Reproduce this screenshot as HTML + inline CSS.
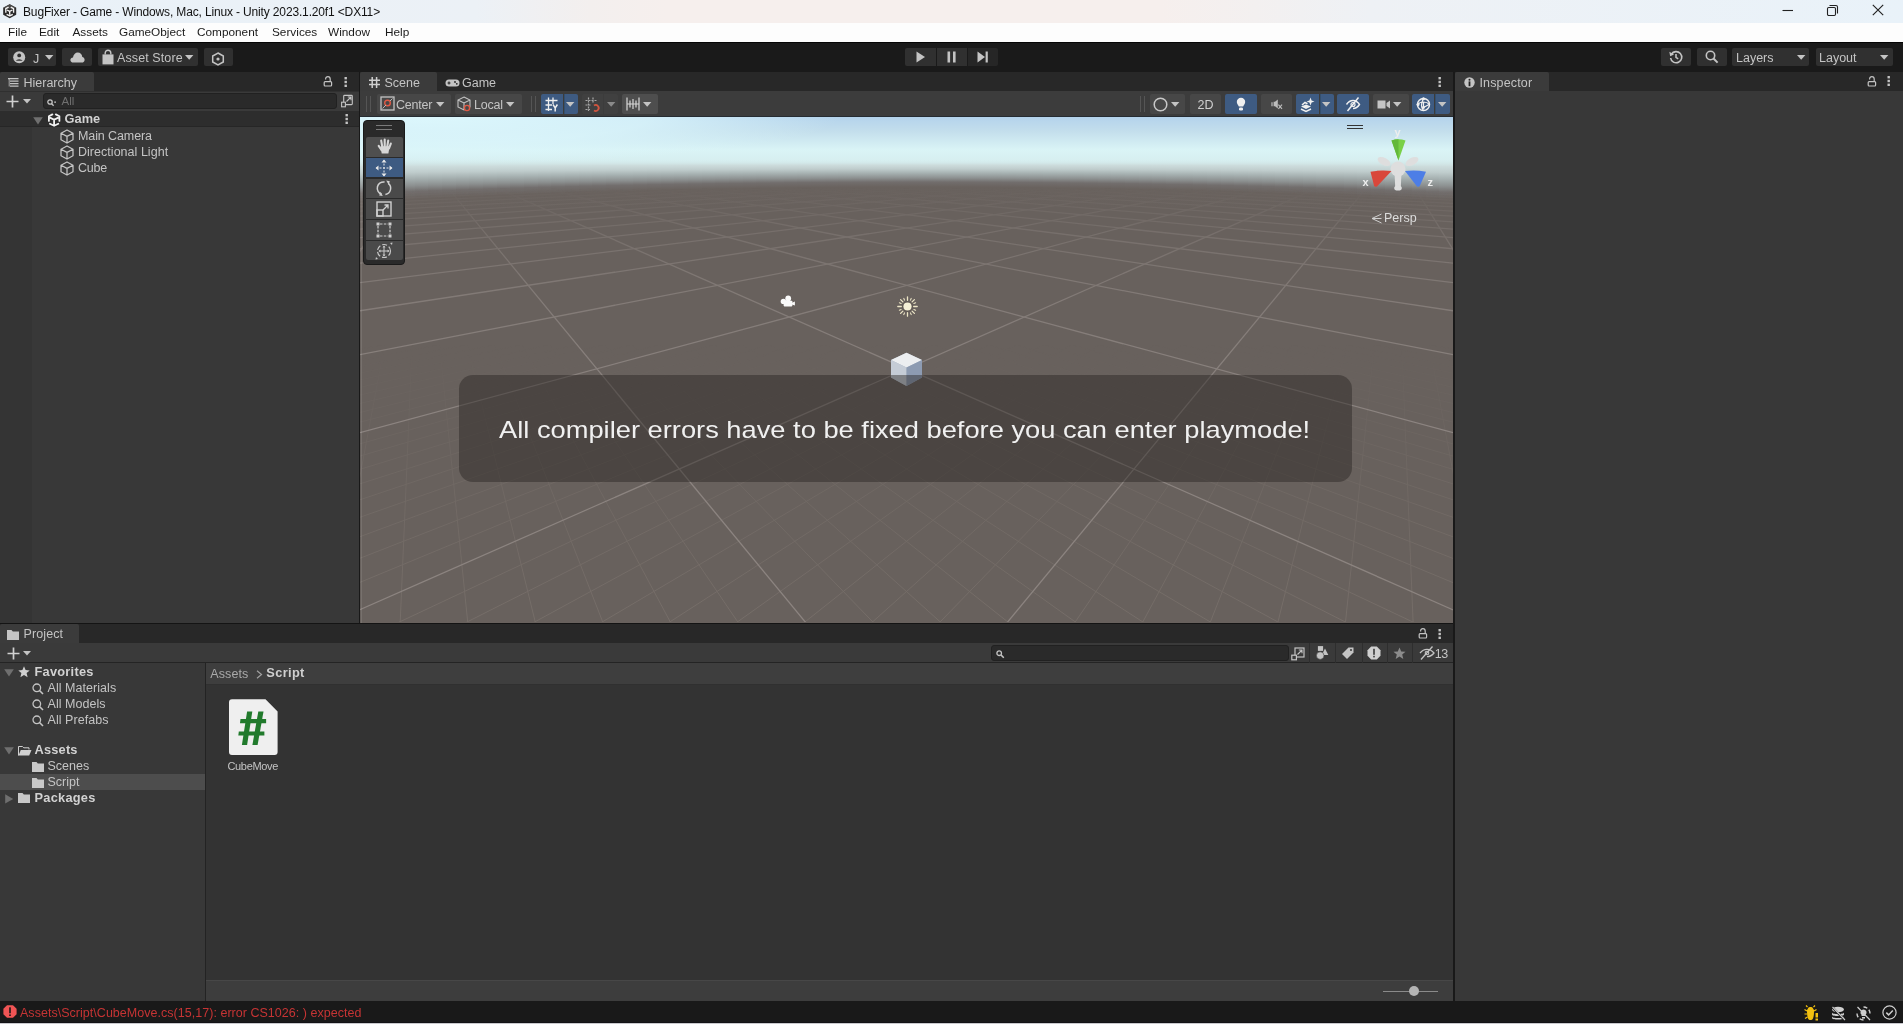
<!DOCTYPE html>
<html><head><meta charset="utf-8">
<style>
*{box-sizing:border-box;margin:0;padding:0}
body{width:1903px;height:1024px;position:relative;overflow:hidden;will-change:transform;background:#191919;font-family:"Liberation Sans",sans-serif;font-size:12.5px;color:#c4c4c4}
.a{position:absolute}
.t{position:absolute;white-space:nowrap;line-height:1}
svg{position:absolute;overflow:visible}
#title{left:0;top:0;width:1903px;height:22.5px;background:linear-gradient(90deg,#e9f1f8 0%,#ecf1f6 25%,#f3efee 31%,#f6efed 35%,#f6efed 61%,#f3f0f0 66%,#eef1f5 72%,#e9f2f9 100%)}
#menu{left:0;top:22.5px;width:1903px;height:20px;background:#fdfdfd}
#menu span{position:absolute;top:4.8px;color:#1a1a1a;font-size:11.8px;line-height:1}
.tb{position:absolute;top:48px;height:18px;background:#303030;border-radius:2px}
.tabstrip{position:absolute;background:#282828}
.tab{position:absolute;background:#3b3b3b;border-radius:2px 2px 0 0}
.sb{position:absolute;top:94px;height:20px;background:#474747;border-radius:2px}
.blue{background:#3e5b82}
.w{fill:#c4c4c4}
.s{stroke:#c4c4c4;fill:none}
</style></head><body>

<!-- ============ TITLE BAR ============ -->
<div id="title" class="a">
  <svg style="left:3px;top:3.5px" width="14" height="15" viewBox="0 0 14 15">
    <path d="M6.7 0.3L13.2 3.8V10.8L6.7 14.3L0.2 10.8V3.8Z" fill="#2a2a2a"/><path d="M6.7 0.3L13.2 3.8L6.7 5L0.2 3.8Z" fill="#4a4a4a"/>
    <g stroke="#f4f4f4" stroke-width="1.35" fill="none" stroke-linejoin="round"><path d="M5.6 3.1L2.8 4.6V8.7M7.8 3.1L10.6 4.6V8.7M4 6L6.7 7.4L9.4 6M6.7 7.4V10.8M3.6 10.3L6.7 11.9L9.8 10.3"/></g>
  </svg>
  <span class="t" style="left:23px;top:5.5px;font-size:12px;letter-spacing:-0.15px;color:#111">BugFixer - Game - Windows, Mac, Linux - Unity 2023.1.20f1 &lt;DX11&gt;</span>
  <svg style="left:1782px;top:5px" width="12" height="12" viewBox="0 0 12 12"><path d="M0.5 5.5H11" stroke="#222" stroke-width="1.1"/></svg>
  <svg style="left:1826px;top:4px" width="13" height="13" viewBox="0 0 13 13"><rect x="1.5" y="3.5" width="8" height="8" rx="1.2" stroke="#222" fill="none" stroke-width="1.1"/><path d="M3.5 1.5H10a1.5 1.5 0 0 1 1.5 1.5V9.5" stroke="#222" fill="none" stroke-width="1.1"/></svg>
  <svg style="left:1872px;top:4px" width="12" height="12" viewBox="0 0 12 12"><path d="M0.8 0.8L11.2 11.2M11.2 0.8L0.8 11.2" stroke="#222" stroke-width="1.15"/></svg>
</div>

<!-- ============ MENU BAR ============ -->
<div id="menu" class="a">
  <span style="left:8px">File</span><span style="left:39px">Edit</span><span style="left:72.5px">Assets</span><span style="left:119px">GameObject</span><span style="left:197px">Component</span><span style="left:272px">Services</span><span style="left:328px">Window</span><span style="left:385px">Help</span>
</div>

<!-- ============ MAIN TOOLBAR ============ -->
<div class="a" style="left:0;top:42px;width:1903px;height:30px;background:#1a1a1a;border-top:1.5px solid #050505"></div>
<div class="tb" style="left:8px;width:48px"></div>
<svg style="left:13px;top:51px" width="13" height="13" viewBox="0 0 13 13"><circle cx="6.2" cy="6.2" r="6" fill="#c4c4c4"/><circle cx="6.2" cy="4.4" r="1.9" fill="#303030"/><path d="M2.8 9.8a3.6 2.4 0 0 1 6.8 0Z" fill="#303030"/></svg>
<span class="t" style="left:33px;top:53px;font-size:12.5px;color:#c4c4c4">J</span>
<svg style="left:45px;top:55px" width="9" height="5" viewBox="0 0 9 5"><path d="M0 0H8.4L4.2 4.8Z" fill="#c4c4c4"/></svg>
<div class="tb" style="left:62px;width:30px"></div>
<svg style="left:70px;top:52px" width="15" height="11" viewBox="0 0 15 11"><path d="M3.3 10.6C1.5 10.6 0.4 9.4 0.4 8S1.5 5.5 3 5.4C3.3 2.6 5.4 0.5 7.8 0.5C10.2 0.5 12 2.3 12.3 4.9C13.7 5.1 14.6 6.3 14.6 7.7C14.6 9.3 13.5 10.6 11.8 10.6Z" fill="#c4c4c4"/></svg>
<div class="tb" style="left:98px;width:100px"></div>
<svg style="left:102px;top:50px" width="12" height="15" viewBox="0 0 12 15"><path d="M3.2 4.5V3A2.8 2.8 0 0 1 8.8 3V4.5" stroke="#c4c4c4" stroke-width="1.4" fill="none"/><rect x="0.5" y="4.4" width="11" height="10" fill="#c4c4c4"/></svg>
<span class="t" style="left:117px;top:52px;font-size:12.5px;letter-spacing:0.1px">Asset Store</span>
<svg style="left:185px;top:55px" width="9" height="5" viewBox="0 0 9 5"><path d="M0 0H8.4L4.2 4.8Z" fill="#c4c4c4"/></svg>
<div class="tb" style="left:204px;width:29px"></div>
<svg style="left:211px;top:51.5px" width="14" height="14" viewBox="0 0 14 14"><path d="M7 1L12.3 4V10L7 13L1.7 10V4Z" stroke="#c4c4c4" stroke-width="1.5" fill="none"/><circle cx="7" cy="7" r="1.6" fill="#c4c4c4"/></svg>

<div class="tb" style="left:905px;width:31px;border-radius:2px 0 0 2px"></div>
<div class="tb" style="left:937px;width:30px;border-radius:0"></div>
<div class="tb" style="left:968px;width:30px;background:#262626;border-radius:0 2px 2px 0"></div>
<svg style="left:916px;top:51px" width="10" height="12" viewBox="0 0 10 12"><path d="M0.5 0.5L9 6L0.5 11.5Z" fill="#c4c4c4"/></svg>
<svg style="left:947px;top:51px" width="10" height="12" viewBox="0 0 10 12"><rect x="0.5" y="0.5" width="2.6" height="11" fill="#c4c4c4"/><rect x="6" y="0.5" width="2.6" height="11" fill="#c4c4c4"/></svg>
<svg style="left:977px;top:51px" width="12" height="12" viewBox="0 0 12 12"><path d="M0.5 0.5L8 6L0.5 11.5Z" fill="#c4c4c4"/><rect x="8.6" y="0.5" width="2.2" height="11" fill="#c4c4c4"/></svg>

<div class="tb" style="left:1661px;width:30px"></div>
<svg style="left:1669px;top:50px" width="14" height="14" viewBox="0 0 14 14"><path d="M2.4 4.2A5.6 5.6 0 1 1 1.6 8" stroke="#c4c4c4" stroke-width="1.6" fill="none"/><path d="M0.3 1.8L1.2 6.2L5 4.6Z" fill="#c4c4c4"/><path d="M7 4V7.4L9.2 8.8" stroke="#c4c4c4" stroke-width="1.6" fill="none"/></svg>
<div class="tb" style="left:1697px;width:30px"></div>
<svg style="left:1705px;top:50px" width="14" height="14" viewBox="0 0 14 14"><circle cx="5.5" cy="5.5" r="4.2" stroke="#c4c4c4" stroke-width="1.6" fill="none"/><path d="M8.5 8.5L12.6 12.6" stroke="#c4c4c4" stroke-width="2"/></svg>
<div class="tb" style="left:1732px;width:77px"></div>
<span class="t" style="left:1736px;top:51.8px;font-size:12.5px">Layers</span>
<svg style="left:1797px;top:55px" width="9" height="5" viewBox="0 0 9 5"><path d="M0 0H8.4L4.2 4.8Z" fill="#c4c4c4"/></svg>
<div class="tb" style="left:1816px;width:77px"></div>
<span class="t" style="left:1819px;top:51.8px;font-size:12.5px">Layout</span>
<svg style="left:1880px;top:55px" width="9" height="5" viewBox="0 0 9 5"><path d="M0 0H8.4L4.2 4.8Z" fill="#c4c4c4"/></svg>

<!-- ============ HIERARCHY ============ -->
<div class="tabstrip" style="left:0;top:72px;width:359px;height:19px"></div>
<div class="tab" style="left:0;top:72px;width:94px;height:19px"></div>
<svg style="left:8px;top:78px" width="11" height="9" viewBox="0 0 11 9"><path d="M0 0.6H10.5M2 3.1H10.5M2 5.6H10.5M2 8.1H10.5" stroke="#c4c4c4" stroke-width="1.3"/><path d="M1.2 1V8.5" stroke="#c4c4c4" stroke-width="0.8"/></svg>
<span class="t" style="left:23.5px;top:77.4px;font-size:12.5px;letter-spacing:0px;color:#c4c4c4">Hierarchy</span>
<svg style="left:323px;top:76px" width="10" height="11" viewBox="0 0 10 11"><path d="M2.6 3.6V2.9A2.3 2.3 0 0 1 7.2 2.9V5.4" stroke="#c4c4c4" stroke-width="1.2" fill="none"/><rect x="1.2" y="5.6" width="7.4" height="4.4" rx="0.9" stroke="#c4c4c4" stroke-width="1.2" fill="none"/></svg>
<svg style="left:344px;top:77px" width="4" height="10" viewBox="0 0 4 10"><rect x="0.5" y="0" width="2.4" height="2.4" fill="#c4c4c4"/><rect x="0.5" y="3.8" width="2.4" height="2.4" fill="#c4c4c4"/><rect x="0.5" y="7.6" width="2.4" height="2.4" fill="#c4c4c4"/></svg>
<div class="a" style="left:0;top:91px;width:359px;height:20px;background:#3a3a3a;border-top:1px solid #303030"></div>
<svg style="left:6px;top:95px" width="13" height="13" viewBox="0 0 13 13"><path d="M6.5 0.5V12.5M0.5 6.5H12.5" stroke="#d0d0d0" stroke-width="1.7"/></svg>
<svg style="left:22.5px;top:99px" width="9" height="5" viewBox="0 0 9 5"><path d="M0 0H8L4 4.6Z" fill="#c4c4c4"/></svg>
<div class="a" style="left:43px;top:93px;width:294px;height:15.5px;background:#2a2a2a;border-radius:3px;border:1px solid #212121"></div>
<svg style="left:47px;top:98.5px" width="10" height="8" viewBox="0 0 10 8"><circle cx="3" cy="3" r="2.2" stroke="#c4c4c4" stroke-width="1.3" fill="none"/><path d="M4.6 4.6L6.6 6.8" stroke="#c4c4c4" stroke-width="1.4"/><path d="M7.2 3.2H9" stroke="#c4c4c4" stroke-width="1.3"/></svg>
<span class="t" style="left:61.5px;top:96.2px;font-size:11.5px;color:#707070">All</span>
<svg style="left:340px;top:94px" width="14" height="14" viewBox="0 0 14 14"><rect x="3.7" y="1.4" width="8.6" height="9.2" rx="0.8" stroke="#c4c4c4" fill="none" stroke-width="1.1"/><rect x="1.6" y="8.2" width="3.8" height="4.6" stroke="#c4c4c4" fill="#3c3c3c" stroke-width="1.1"/><path d="M6.5 7.5L11 3M7.8 3H11V6.2" stroke="#c4c4c4" fill="none" stroke-width="1.1"/></svg>
<div class="a" style="left:0;top:111px;width:359px;height:512px;background:#383838"></div>
<div class="a" style="left:0;top:127px;width:32px;height:496px;background:#343434"></div>
<div class="a" style="left:0;top:111px;width:359px;height:16px;background:#2d2d2d;border-bottom:1px solid #262626"></div>
<svg style="left:33px;top:116.5px" width="10" height="8" viewBox="0 0 10 8"><path d="M0.2 0.2H9.8L5 7.6Z" fill="#6f6f6f"/></svg>
<svg style="left:47.5px;top:112.6px" width="12.5" height="14" viewBox="0 0 12.5 14"><g stroke="#f2f2f2" stroke-width="1.8" fill="none" stroke-linejoin="round" stroke-linecap="round"><path d="M4.4 1.4L0.9 3.3V7.9M7.8 1.4L11.4 3.3V7.9M2.4 4.9L6.1 6.7L9.8 4.9M6.1 6.7V11.4M1.9 10.8L6.1 12.8L10.3 10.8"/></g></svg>
<span class="t" style="left:64.5px;top:113.3px;font-size:12.8px;font-weight:bold;color:#d2d2d2;letter-spacing:0.05px">Game</span>
<svg style="left:344.5px;top:114px" width="4" height="10" viewBox="0 0 4 10"><rect x="0.5" y="0" width="2.4" height="2.4" fill="#c4c4c4"/><rect x="0.5" y="3.8" width="2.4" height="2.4" fill="#c4c4c4"/><rect x="0.5" y="7.6" width="2.4" height="2.4" fill="#c4c4c4"/></svg>
<!-- children -->
<svg style="left:60px;top:128.5px" width="14" height="15" viewBox="0 0 14 15"><path d="M7 1L13 4.2V10.8L7 14L1 10.8V4.2Z M1 4.2L7 7.4L13 4.2M7 7.4V14" stroke="#c4c4c4" stroke-width="1.25" fill="none" stroke-linejoin="round"/></svg>
<span class="t" style="left:78px;top:129.6px;font-size:12.5px;letter-spacing:-0.1px">Main Camera</span>
<svg style="left:60px;top:144.5px" width="14" height="15" viewBox="0 0 14 15"><path d="M7 1L13 4.2V10.8L7 14L1 10.8V4.2Z M1 4.2L7 7.4L13 4.2M7 7.4V14" stroke="#c4c4c4" stroke-width="1.25" fill="none" stroke-linejoin="round"/></svg>
<span class="t" style="left:78px;top:145.6px;font-size:12.5px;letter-spacing:0.03px">Directional Light</span>
<svg style="left:60px;top:160.5px" width="14" height="15" viewBox="0 0 14 15"><path d="M7 1L13 4.2V10.8L7 14L1 10.8V4.2Z M1 4.2L7 7.4L13 4.2M7 7.4V14" stroke="#c4c4c4" stroke-width="1.25" fill="none" stroke-linejoin="round"/></svg>
<span class="t" style="left:78px;top:161.6px;font-size:12.5px;letter-spacing:-0.2px">Cube</span>

<!-- separator between hierarchy and scene -->
<div class="a" style="left:359px;top:72px;width:2px;height:551px;background:#181818"></div>

<!-- ============ SCENE ============ -->
<div class="tabstrip" style="left:360px;top:72px;width:1093px;height:19px"></div>
<div class="tab" style="left:360px;top:72px;width:77px;height:19px"></div>
<svg style="left:369px;top:77px" width="11" height="11" viewBox="0 0 11 11"><path d="M3.2 0V11M7.6 0V11M0 3.2H11M0 7.6H11" stroke="#d0d0d0" stroke-width="1.5"/></svg>
<span class="t" style="left:384.5px;top:77px;font-size:12.5px">Scene</span>
<svg style="left:444.5px;top:79px" width="15" height="8" viewBox="0 0 15 8"><rect x="0.5" y="0.5" width="14" height="7" rx="3.5" fill="#c4c4c4"/><path d="M2.5 4H5.5M4 2.5V5.5" stroke="#232323" stroke-width="1.1"/><circle cx="10" cy="3" r="0.9" fill="#232323"/><circle cx="11.8" cy="4.8" r="0.9" fill="#232323"/></svg>
<span class="t" style="left:462px;top:77px;font-size:12.5px">Game</span>
<svg style="left:1438px;top:77px" width="4" height="10" viewBox="0 0 4 10"><rect x="0.5" y="0" width="2.4" height="2.4" fill="#c4c4c4"/><rect x="0.5" y="3.8" width="2.4" height="2.4" fill="#c4c4c4"/><rect x="0.5" y="7.6" width="2.4" height="2.4" fill="#c4c4c4"/></svg>

<div class="a" style="left:360px;top:91px;width:1093px;height:26px;background:#3c3c3c;border-bottom:1px solid #262c32"></div>
<div class="a" style="left:366px;top:96px;width:1px;height:16px;background:#555"></div>
<div class="a" style="left:370px;top:96px;width:1px;height:16px;background:#555"></div>
<div class="sb" style="left:377px;width:74px"></div>
<svg style="left:380px;top:96px" width="15" height="15" viewBox="0 0 15 15"><rect x="1" y="1" width="13" height="13" stroke="#c4c4c4" stroke-width="1.3" fill="none"/><circle cx="7.5" cy="7" r="2.8" stroke="#e05a45" stroke-width="1.4" fill="none"/><path d="M2.5 12.5L6 9M12.5 2.5L10 5" stroke="#c4c4c4" stroke-width="0.9"/></svg>
<span class="t" style="left:396px;top:98.5px;font-size:12.5px;letter-spacing:-0.2px">Center</span>
<svg style="left:436px;top:102px" width="9" height="5" viewBox="0 0 9 5"><path d="M0 0H8.4L4.2 4.8Z" fill="#c4c4c4"/></svg>
<div class="sb" style="left:455px;width:67px"></div>
<svg style="left:457px;top:95.5px" width="15" height="16" viewBox="0 0 15 16"><path d="M7 1L13 4V11L7 14L1 11V4Z M1 4L7 7L13 4M7 7V14" stroke="#c4c4c4" stroke-width="1.1" fill="none"/><circle cx="10" cy="12" r="2.6" stroke="#e05a45" stroke-width="1.4" fill="#474747"/></svg>
<span class="t" style="left:474px;top:98.5px;font-size:12.5px;letter-spacing:-0.2px">Local</span>
<svg style="left:506px;top:102px" width="9" height="5" viewBox="0 0 9 5"><path d="M0 0H8.4L4.2 4.8Z" fill="#c4c4c4"/></svg>

<div class="a" style="left:531px;top:96px;width:1px;height:16px;background:#555"></div>
<div class="a" style="left:534.5px;top:96px;width:1px;height:16px;background:#555"></div>
<div class="sb blue" style="left:541px;width:22px;border-radius:2px 0 0 2px"></div>
<div class="sb blue" style="left:563.5px;width:14px;border-radius:0 2px 2px 0;border-left:1px solid #34506f"></div>
<svg style="left:545px;top:96.5px" width="15" height="15" viewBox="0 0 15 15"><path d="M3.5 0.5V14M8 0.5V7M0.5 3.5H12.5M0.5 8H7M0.5 12.5H7" stroke="#f0f0f0" stroke-width="1.3" fill="none"/><path d="M8 7.5L10.2 10.8L12.4 7.5M10.2 10.8V14.5" stroke="#f0f0f0" stroke-width="1.5" fill="none"/></svg>
<svg style="left:566px;top:102px" width="9" height="5" viewBox="0 0 9 5"><path d="M0 0H8.4L4.2 4.8Z" fill="#c4c4c4"/></svg>
<div class="sb" style="left:582px;width:21px;border-radius:2px 0 0 2px;background:#404040"></div>
<div class="sb" style="left:604px;width:14px;border-radius:0 2px 2px 0;background:#404040"></div>
<svg style="left:585px;top:96.5px" width="15" height="15" viewBox="0 0 15 15"><path d="M3.5 0.5V14M8 0.5V6M0.5 3.5H12M0.5 8H6M0.5 12.5H5" stroke="#a8a8a8" stroke-width="1.2" fill="none" stroke-dasharray="2 1"/><path d="M9 8.5A3 3 0 1 1 9 13.5" stroke="#d2553f" stroke-width="1.8" fill="none"/></svg>
<svg style="left:607px;top:102px" width="9" height="5" viewBox="0 0 9 5"><path d="M0 0H8.4L4.2 4.8Z" fill="#8a8a8a"/></svg>
<div class="sb" style="left:622px;width:36px;background:#4e4e4e"></div>
<svg style="left:626px;top:97px" width="14" height="14" viewBox="0 0 14 14"><path d="M1 0.5V13.5M13 0.5V13.5M1 7H13M4 3.5V10.5M7 2V12M10 3.5V10.5" stroke="#d8d8d8" stroke-width="1.2" fill="none"/></svg>
<svg style="left:643px;top:102px" width="9" height="5" viewBox="0 0 9 5"><path d="M0 0H8.4L4.2 4.8Z" fill="#c4c4c4"/></svg>

<div class="a" style="left:1140px;top:96px;width:1px;height:16px;background:#555"></div>
<div class="a" style="left:1143.5px;top:96px;width:1px;height:16px;background:#555"></div>
<div class="sb" style="left:1150px;width:35px"></div>
<svg style="left:1153px;top:96.5px" width="15" height="15" viewBox="0 0 15 15"><circle cx="7.5" cy="7.5" r="6.3" stroke="#c8c8c8" stroke-width="1.5" fill="none"/><path d="M13.8 7.5A6.3 6.3 0 0 1 4 12.8A6 6 0 0 0 11.5 3A6.3 6.3 0 0 1 13.8 7.5Z" fill="#c8c8c8"/></svg>
<svg style="left:1171px;top:102px" width="9" height="5" viewBox="0 0 9 5"><path d="M0 0H8.4L4.2 4.8Z" fill="#c4c4c4"/></svg>
<div class="sb" style="left:1190px;width:31px"></div>
<span class="t" style="left:1197.5px;top:98.6px;font-size:12.5px;color:#d0d0d0">2D</span>
<div class="sb blue" style="left:1225px;width:32px"></div>
<svg style="left:1236px;top:96.5px" width="10" height="15" viewBox="0 0 10 15"><path d="M5 0.8A4.2 4.2 0 0 1 9.2 5C9.2 7 7.6 8 7.2 9.6H2.8C2.4 8 0.8 7 0.8 5A4.2 4.2 0 0 1 5 0.8Z" fill="#f0f0f0"/><rect x="3" y="10.5" width="4" height="3" rx="1.2" fill="#f0f0f0"/></svg>
<div class="sb" style="left:1261px;width:31px"></div>
<svg style="left:1271px;top:99px" width="12" height="11" viewBox="0 0 12 11"><path d="M1 3.2V7.2" stroke="#bdbdbd" stroke-width="1.2"/><path d="M2.6 2.8H4L6.8 0.5V9.5L4 7.2H2.6Z" fill="#bdbdbd"/><path d="M7.4 5.6L11 9.8M11 5.6L7.4 9.8" stroke="#bdbdbd" stroke-width="1.1"/></svg>
<div class="sb blue" style="left:1296px;width:23px;border-radius:2px 0 0 2px"></div>
<div class="sb blue" style="left:1319.5px;width:14px;border-radius:0 2px 2px 0;border-left:1px solid #34506f"></div>
<svg style="left:1300px;top:96.5px" width="15" height="15" viewBox="0 0 15 15"><path d="M1 9.5L6 7.5L11 9.5L6 12Z" fill="#f0f0f0"/><path d="M1 12L6 14.5L11 12" stroke="#f0f0f0" stroke-width="1.5" fill="none"/><path d="M10.5 0.5L11.6 3.4L14.5 4.5L11.6 5.6L10.5 8.5L9.4 5.6L6.5 4.5L9.4 3.4Z" fill="#f0f0f0"/><path d="M2 8L5 5.5L7.5 6.8" stroke="#f0f0f0" stroke-width="1.6" fill="none"/></svg>
<svg style="left:1322px;top:102px" width="9" height="5" viewBox="0 0 9 5"><path d="M0 0H8.4L4.2 4.8Z" fill="#c4c4c4"/></svg>
<div class="sb blue" style="left:1337px;width:32px"></div>
<svg style="left:1345px;top:96px" width="16" height="16" viewBox="0 0 16 16"><path d="M1.5 8.5C3.5 5.5 6 4.5 8 4.5C10 4.5 12.5 5.5 14.5 8.5C12.5 11.5 10 12.5 8 12.5" stroke="#f0f0f0" stroke-width="1.4" fill="none"/><circle cx="8" cy="8.5" r="2" stroke="#f0f0f0" stroke-width="1.2" fill="none"/><path d="M2.5 15L13.5 1.5" stroke="#f0f0f0" stroke-width="1.5"/></svg>
<div class="sb" style="left:1373px;width:36px"></div>
<svg style="left:1377px;top:98.5px" width="14" height="11" viewBox="0 0 14 11"><rect x="0.5" y="1.5" width="8" height="8" fill="#c4c4c4"/><path d="M9.5 4L13 1.5V9.5L9.5 7Z" fill="#c4c4c4"/></svg>
<svg style="left:1393px;top:102px" width="9" height="5" viewBox="0 0 9 5"><path d="M0 0H8.4L4.2 4.8Z" fill="#c4c4c4"/></svg>
<div class="sb blue" style="left:1412px;width:22px;border-radius:2px 0 0 2px"></div>
<div class="sb blue" style="left:1434.5px;width:15px;border-radius:0 2px 2px 0;border-left:1px solid #34506f"></div>
<svg style="left:1415.5px;top:96.5px" width="15" height="15" viewBox="0 0 15 15"><circle cx="7.5" cy="7.5" r="6" stroke="#f0f0f0" stroke-width="1.5" fill="none"/><path d="M1.5 7.5C3 5.8 5 5 7.5 5S12 5.8 13.5 7.5M7.5 1.5C6 4 5.5 6 5.5 8.5S6.5 12 7.5 13.5M7.5 5.5V10.5L13 7.5" stroke="#f0f0f0" stroke-width="1.2" fill="none"/><circle cx="7.5" cy="1.8" r="1.5" fill="#f0f0f0"/><circle cx="2" cy="7.5" r="1.5" fill="#f0f0f0"/><circle cx="7.5" cy="10.5" r="1.4" fill="#f0f0f0"/></svg>
<svg style="left:1438px;top:102px" width="9" height="5" viewBox="0 0 9 5"><path d="M0 0H8.4L4.2 4.8Z" fill="#c4c4c4"/></svg>

<!-- scene view -->
<div class="a" style="left:360px;top:117px;width:1093px;height:506px;overflow:hidden;background:#68615d">
  <svg style="left:0;top:0" width="1093" height="90" viewBox="0 0 1093 90"><defs><linearGradient id="skyb" x1="0" y1="0" x2="0" y2="90" gradientUnits="userSpaceOnUse"><stop offset="0.0000" stop-color="#b4d3ec" stop-opacity="1"/><stop offset="0.1556" stop-color="#c3deec" stop-opacity="1"/><stop offset="0.3667" stop-color="#daf4f6" stop-opacity="1"/><stop offset="0.5000" stop-color="#d6eeef" stop-opacity="1"/><stop offset="1.0000" stop-color="#d6eeef" stop-opacity="1"/></linearGradient><linearGradient id="fogb" x1="0" y1="0" x2="0" y2="90" gradientUnits="userSpaceOnUse"><stop offset="0.4778" stop-color="#d6eeef" stop-opacity="0"/><stop offset="0.5333" stop-color="#cbdada" stop-opacity="0.9"/><stop offset="0.5778" stop-color="#bfcccc" stop-opacity="1"/><stop offset="0.6222" stop-color="#a7b2b2" stop-opacity="1"/><stop offset="0.6778" stop-color="#8c9090" stop-opacity="1"/><stop offset="0.7222" stop-color="#726e6d" stop-opacity="1"/><stop offset="0.7778" stop-color="#69625e" stop-opacity="1"/><stop offset="1.0000" stop-color="#68615d" stop-opacity="1"/></linearGradient><radialGradient id="skl" cx="0" cy="0" r="1" gradientUnits="userSpaceOnUse" gradientTransform="translate(60 0) scale(420 48)"><stop offset="0" stop-color="#dcf7fc" stop-opacity="1"/><stop offset="0.55" stop-color="#dcf7fc" stop-opacity="0.75"/><stop offset="1" stop-color="#dcf7fc" stop-opacity="0"/></radialGradient><linearGradient id="f0" href="#fogb" gradientTransform="translate(0 62.15) scale(1 1.564) translate(0 -56)"/><linearGradient id="f1" href="#fogb" gradientTransform="translate(0 61.85) scale(1 1.536) translate(0 -56)"/><linearGradient id="f2" href="#fogb" gradientTransform="translate(0 61.56) scale(1 1.509) translate(0 -56)"/><linearGradient id="f3" href="#fogb" gradientTransform="translate(0 61.27) scale(1 1.483) translate(0 -56)"/><linearGradient id="f4" href="#fogb" gradientTransform="translate(0 60.99) scale(1 1.458) translate(0 -56)"/><linearGradient id="f5" href="#fogb" gradientTransform="translate(0 60.72) scale(1 1.433) translate(0 -56)"/><linearGradient id="f6" href="#fogb" gradientTransform="translate(0 60.46) scale(1 1.409) translate(0 -56)"/><linearGradient id="f7" href="#fogb" gradientTransform="translate(0 60.21) scale(1 1.385) translate(0 -56)"/><linearGradient id="f8" href="#fogb" gradientTransform="translate(0 59.96) scale(1 1.363) translate(0 -56)"/><linearGradient id="f9" href="#fogb" gradientTransform="translate(0 59.72) scale(1 1.341) translate(0 -56)"/><linearGradient id="f10" href="#fogb" gradientTransform="translate(0 59.49) scale(1 1.320) translate(0 -56)"/><linearGradient id="f11" href="#fogb" gradientTransform="translate(0 59.26) scale(1 1.299) translate(0 -56)"/><linearGradient id="f12" href="#fogb" gradientTransform="translate(0 59.04) scale(1 1.279) translate(0 -56)"/><linearGradient id="f13" href="#fogb" gradientTransform="translate(0 58.83) scale(1 1.260) translate(0 -56)"/><linearGradient id="f14" href="#fogb" gradientTransform="translate(0 58.63) scale(1 1.241) translate(0 -56)"/><linearGradient id="f15" href="#fogb" gradientTransform="translate(0 58.44) scale(1 1.223) translate(0 -56)"/><linearGradient id="f16" href="#fogb" gradientTransform="translate(0 58.25) scale(1 1.206) translate(0 -56)"/><linearGradient id="f17" href="#fogb" gradientTransform="translate(0 58.07) scale(1 1.190) translate(0 -56)"/><linearGradient id="f18" href="#fogb" gradientTransform="translate(0 57.90) scale(1 1.174) translate(0 -56)"/><linearGradient id="f19" href="#fogb" gradientTransform="translate(0 57.73) scale(1 1.159) translate(0 -56)"/><linearGradient id="f20" href="#fogb" gradientTransform="translate(0 57.57) scale(1 1.144) translate(0 -56)"/><linearGradient id="f21" href="#fogb" gradientTransform="translate(0 57.42) scale(1 1.131) translate(0 -56)"/><linearGradient id="f22" href="#fogb" gradientTransform="translate(0 57.28) scale(1 1.117) translate(0 -56)"/><linearGradient id="f23" href="#fogb" gradientTransform="translate(0 57.15) scale(1 1.105) translate(0 -56)"/><linearGradient id="f24" href="#fogb" gradientTransform="translate(0 57.02) scale(1 1.093) translate(0 -56)"/><linearGradient id="f25" href="#fogb" gradientTransform="translate(0 56.90) scale(1 1.082) translate(0 -56)"/><linearGradient id="f26" href="#fogb" gradientTransform="translate(0 56.79) scale(1 1.072) translate(0 -56)"/><linearGradient id="f27" href="#fogb" gradientTransform="translate(0 56.68) scale(1 1.063) translate(0 -56)"/><linearGradient id="f28" href="#fogb" gradientTransform="translate(0 56.58) scale(1 1.054) translate(0 -56)"/><linearGradient id="f29" href="#fogb" gradientTransform="translate(0 56.49) scale(1 1.045) translate(0 -56)"/><linearGradient id="f30" href="#fogb" gradientTransform="translate(0 56.41) scale(1 1.038) translate(0 -56)"/><linearGradient id="f31" href="#fogb" gradientTransform="translate(0 56.34) scale(1 1.031) translate(0 -56)"/><linearGradient id="f32" href="#fogb" gradientTransform="translate(0 56.27) scale(1 1.025) translate(0 -56)"/><linearGradient id="f33" href="#fogb" gradientTransform="translate(0 56.21) scale(1 1.019) translate(0 -56)"/><linearGradient id="f34" href="#fogb" gradientTransform="translate(0 56.16) scale(1 1.014) translate(0 -56)"/><linearGradient id="f35" href="#fogb" gradientTransform="translate(0 56.11) scale(1 1.010) translate(0 -56)"/><linearGradient id="f36" href="#fogb" gradientTransform="translate(0 56.08) scale(1 1.007) translate(0 -56)"/><linearGradient id="f37" href="#fogb" gradientTransform="translate(0 56.05) scale(1 1.004) translate(0 -56)"/><linearGradient id="f38" href="#fogb" gradientTransform="translate(0 56.02) scale(1 1.002) translate(0 -56)"/><linearGradient id="f39" href="#fogb" gradientTransform="translate(0 56.01) scale(1 1.001) translate(0 -56)"/><linearGradient id="f40" href="#fogb" gradientTransform="translate(0 56.00) scale(1 1.000) translate(0 -56)"/><linearGradient id="f41" href="#fogb" gradientTransform="translate(0 56.00) scale(1 1.000) translate(0 -56)"/><linearGradient id="f42" href="#fogb" gradientTransform="translate(0 56.01) scale(1 1.001) translate(0 -56)"/><linearGradient id="f43" href="#fogb" gradientTransform="translate(0 56.02) scale(1 1.002) translate(0 -56)"/><linearGradient id="f44" href="#fogb" gradientTransform="translate(0 56.05) scale(1 1.004) translate(0 -56)"/><linearGradient id="f45" href="#fogb" gradientTransform="translate(0 56.08) scale(1 1.007) translate(0 -56)"/><linearGradient id="f46" href="#fogb" gradientTransform="translate(0 56.11) scale(1 1.010) translate(0 -56)"/><linearGradient id="f47" href="#fogb" gradientTransform="translate(0 56.16) scale(1 1.015) translate(0 -56)"/><linearGradient id="f48" href="#fogb" gradientTransform="translate(0 56.21) scale(1 1.019) translate(0 -56)"/><linearGradient id="f49" href="#fogb" gradientTransform="translate(0 56.27) scale(1 1.025) translate(0 -56)"/><linearGradient id="f50" href="#fogb" gradientTransform="translate(0 56.34) scale(1 1.031) translate(0 -56)"/><linearGradient id="f51" href="#fogb" gradientTransform="translate(0 56.41) scale(1 1.038) translate(0 -56)"/><linearGradient id="f52" href="#fogb" gradientTransform="translate(0 56.50) scale(1 1.046) translate(0 -56)"/><linearGradient id="f53" href="#fogb" gradientTransform="translate(0 56.59) scale(1 1.054) translate(0 -56)"/><linearGradient id="f54" href="#fogb" gradientTransform="translate(0 56.68) scale(1 1.063) translate(0 -56)"/><linearGradient id="f55" href="#fogb" gradientTransform="translate(0 56.79) scale(1 1.072) translate(0 -56)"/><linearGradient id="f56" href="#fogb" gradientTransform="translate(0 56.90) scale(1 1.083) translate(0 -56)"/><linearGradient id="f57" href="#fogb" gradientTransform="translate(0 57.02) scale(1 1.094) translate(0 -56)"/><linearGradient id="f58" href="#fogb" gradientTransform="translate(0 57.15) scale(1 1.105) translate(0 -56)"/><linearGradient id="f59" href="#fogb" gradientTransform="translate(0 57.29) scale(1 1.118) translate(0 -56)"/><linearGradient id="f60" href="#fogb" gradientTransform="translate(0 57.43) scale(1 1.131) translate(0 -56)"/><linearGradient id="f61" href="#fogb" gradientTransform="translate(0 57.58) scale(1 1.145) translate(0 -56)"/><linearGradient id="f62" href="#fogb" gradientTransform="translate(0 57.74) scale(1 1.159) translate(0 -56)"/><linearGradient id="f63" href="#fogb" gradientTransform="translate(0 57.90) scale(1 1.174) translate(0 -56)"/><linearGradient id="f64" href="#fogb" gradientTransform="translate(0 58.07) scale(1 1.190) translate(0 -56)"/><linearGradient id="f65" href="#fogb" gradientTransform="translate(0 58.25) scale(1 1.207) translate(0 -56)"/><linearGradient id="f66" href="#fogb" gradientTransform="translate(0 58.44) scale(1 1.224) translate(0 -56)"/><linearGradient id="f67" href="#fogb" gradientTransform="translate(0 58.64) scale(1 1.242) translate(0 -56)"/><linearGradient id="f68" href="#fogb" gradientTransform="translate(0 58.84) scale(1 1.260) translate(0 -56)"/><linearGradient id="f69" href="#fogb" gradientTransform="translate(0 59.05) scale(1 1.279) translate(0 -56)"/><linearGradient id="f70" href="#fogb" gradientTransform="translate(0 59.27) scale(1 1.299) translate(0 -56)"/><linearGradient id="f71" href="#fogb" gradientTransform="translate(0 59.49) scale(1 1.320) translate(0 -56)"/><linearGradient id="f72" href="#fogb" gradientTransform="translate(0 59.72) scale(1 1.341) translate(0 -56)"/><linearGradient id="f73" href="#fogb" gradientTransform="translate(0 59.96) scale(1 1.363) translate(0 -56)"/><linearGradient id="f74" href="#fogb" gradientTransform="translate(0 60.21) scale(1 1.386) translate(0 -56)"/><linearGradient id="f75" href="#fogb" gradientTransform="translate(0 60.47) scale(1 1.409) translate(0 -56)"/><linearGradient id="f76" href="#fogb" gradientTransform="translate(0 60.73) scale(1 1.434) translate(0 -56)"/><linearGradient id="f77" href="#fogb" gradientTransform="translate(0 61.00) scale(1 1.458) translate(0 -56)"/><linearGradient id="f78" href="#fogb" gradientTransform="translate(0 61.28) scale(1 1.484) translate(0 -56)"/><linearGradient id="f79" href="#fogb" gradientTransform="translate(0 61.56) scale(1 1.510) translate(0 -56)"/></defs><rect x="0" y="0" width="1093" height="90" fill="url(#skyb)"/><rect x="0" y="0" width="700" height="60" fill="url(#skl)"/><rect x="0" y="0" width="14" height="90" fill="url(#f0)" shape-rendering="crispEdges"/><rect x="14" y="0" width="13" height="90" fill="url(#f1)" shape-rendering="crispEdges"/><rect x="27" y="0" width="14" height="90" fill="url(#f2)" shape-rendering="crispEdges"/><rect x="41" y="0" width="14" height="90" fill="url(#f3)" shape-rendering="crispEdges"/><rect x="55" y="0" width="13" height="90" fill="url(#f4)" shape-rendering="crispEdges"/><rect x="68" y="0" width="14" height="90" fill="url(#f5)" shape-rendering="crispEdges"/><rect x="82" y="0" width="14" height="90" fill="url(#f6)" shape-rendering="crispEdges"/><rect x="96" y="0" width="13" height="90" fill="url(#f7)" shape-rendering="crispEdges"/><rect x="109" y="0" width="14" height="90" fill="url(#f8)" shape-rendering="crispEdges"/><rect x="123" y="0" width="14" height="90" fill="url(#f9)" shape-rendering="crispEdges"/><rect x="137" y="0" width="13" height="90" fill="url(#f10)" shape-rendering="crispEdges"/><rect x="150" y="0" width="14" height="90" fill="url(#f11)" shape-rendering="crispEdges"/><rect x="164" y="0" width="14" height="90" fill="url(#f12)" shape-rendering="crispEdges"/><rect x="178" y="0" width="13" height="90" fill="url(#f13)" shape-rendering="crispEdges"/><rect x="191" y="0" width="14" height="90" fill="url(#f14)" shape-rendering="crispEdges"/><rect x="205" y="0" width="14" height="90" fill="url(#f15)" shape-rendering="crispEdges"/><rect x="219" y="0" width="13" height="90" fill="url(#f16)" shape-rendering="crispEdges"/><rect x="232" y="0" width="14" height="90" fill="url(#f17)" shape-rendering="crispEdges"/><rect x="246" y="0" width="14" height="90" fill="url(#f18)" shape-rendering="crispEdges"/><rect x="260" y="0" width="13" height="90" fill="url(#f19)" shape-rendering="crispEdges"/><rect x="273" y="0" width="14" height="90" fill="url(#f20)" shape-rendering="crispEdges"/><rect x="287" y="0" width="14" height="90" fill="url(#f21)" shape-rendering="crispEdges"/><rect x="301" y="0" width="13" height="90" fill="url(#f22)" shape-rendering="crispEdges"/><rect x="314" y="0" width="14" height="90" fill="url(#f23)" shape-rendering="crispEdges"/><rect x="328" y="0" width="14" height="90" fill="url(#f24)" shape-rendering="crispEdges"/><rect x="342" y="0" width="13" height="90" fill="url(#f25)" shape-rendering="crispEdges"/><rect x="355" y="0" width="14" height="90" fill="url(#f26)" shape-rendering="crispEdges"/><rect x="369" y="0" width="14" height="90" fill="url(#f27)" shape-rendering="crispEdges"/><rect x="383" y="0" width="13" height="90" fill="url(#f28)" shape-rendering="crispEdges"/><rect x="396" y="0" width="14" height="90" fill="url(#f29)" shape-rendering="crispEdges"/><rect x="410" y="0" width="14" height="90" fill="url(#f30)" shape-rendering="crispEdges"/><rect x="424" y="0" width="13" height="90" fill="url(#f31)" shape-rendering="crispEdges"/><rect x="437" y="0" width="14" height="90" fill="url(#f32)" shape-rendering="crispEdges"/><rect x="451" y="0" width="14" height="90" fill="url(#f33)" shape-rendering="crispEdges"/><rect x="465" y="0" width="13" height="90" fill="url(#f34)" shape-rendering="crispEdges"/><rect x="478" y="0" width="14" height="90" fill="url(#f35)" shape-rendering="crispEdges"/><rect x="492" y="0" width="14" height="90" fill="url(#f36)" shape-rendering="crispEdges"/><rect x="506" y="0" width="13" height="90" fill="url(#f37)" shape-rendering="crispEdges"/><rect x="519" y="0" width="14" height="90" fill="url(#f38)" shape-rendering="crispEdges"/><rect x="533" y="0" width="13" height="90" fill="url(#f39)" shape-rendering="crispEdges"/><rect x="546" y="0" width="14" height="90" fill="url(#f40)" shape-rendering="crispEdges"/><rect x="560" y="0" width="14" height="90" fill="url(#f41)" shape-rendering="crispEdges"/><rect x="574" y="0" width="13" height="90" fill="url(#f42)" shape-rendering="crispEdges"/><rect x="587" y="0" width="14" height="90" fill="url(#f43)" shape-rendering="crispEdges"/><rect x="601" y="0" width="14" height="90" fill="url(#f44)" shape-rendering="crispEdges"/><rect x="615" y="0" width="13" height="90" fill="url(#f45)" shape-rendering="crispEdges"/><rect x="628" y="0" width="14" height="90" fill="url(#f46)" shape-rendering="crispEdges"/><rect x="642" y="0" width="14" height="90" fill="url(#f47)" shape-rendering="crispEdges"/><rect x="656" y="0" width="13" height="90" fill="url(#f48)" shape-rendering="crispEdges"/><rect x="669" y="0" width="14" height="90" fill="url(#f49)" shape-rendering="crispEdges"/><rect x="683" y="0" width="14" height="90" fill="url(#f50)" shape-rendering="crispEdges"/><rect x="697" y="0" width="13" height="90" fill="url(#f51)" shape-rendering="crispEdges"/><rect x="710" y="0" width="14" height="90" fill="url(#f52)" shape-rendering="crispEdges"/><rect x="724" y="0" width="14" height="90" fill="url(#f53)" shape-rendering="crispEdges"/><rect x="738" y="0" width="13" height="90" fill="url(#f54)" shape-rendering="crispEdges"/><rect x="751" y="0" width="14" height="90" fill="url(#f55)" shape-rendering="crispEdges"/><rect x="765" y="0" width="14" height="90" fill="url(#f56)" shape-rendering="crispEdges"/><rect x="779" y="0" width="13" height="90" fill="url(#f57)" shape-rendering="crispEdges"/><rect x="792" y="0" width="14" height="90" fill="url(#f58)" shape-rendering="crispEdges"/><rect x="806" y="0" width="14" height="90" fill="url(#f59)" shape-rendering="crispEdges"/><rect x="820" y="0" width="13" height="90" fill="url(#f60)" shape-rendering="crispEdges"/><rect x="833" y="0" width="14" height="90" fill="url(#f61)" shape-rendering="crispEdges"/><rect x="847" y="0" width="14" height="90" fill="url(#f62)" shape-rendering="crispEdges"/><rect x="861" y="0" width="13" height="90" fill="url(#f63)" shape-rendering="crispEdges"/><rect x="874" y="0" width="14" height="90" fill="url(#f64)" shape-rendering="crispEdges"/><rect x="888" y="0" width="14" height="90" fill="url(#f65)" shape-rendering="crispEdges"/><rect x="902" y="0" width="13" height="90" fill="url(#f66)" shape-rendering="crispEdges"/><rect x="915" y="0" width="14" height="90" fill="url(#f67)" shape-rendering="crispEdges"/><rect x="929" y="0" width="14" height="90" fill="url(#f68)" shape-rendering="crispEdges"/><rect x="943" y="0" width="13" height="90" fill="url(#f69)" shape-rendering="crispEdges"/><rect x="956" y="0" width="14" height="90" fill="url(#f70)" shape-rendering="crispEdges"/><rect x="970" y="0" width="14" height="90" fill="url(#f71)" shape-rendering="crispEdges"/><rect x="984" y="0" width="13" height="90" fill="url(#f72)" shape-rendering="crispEdges"/><rect x="997" y="0" width="14" height="90" fill="url(#f73)" shape-rendering="crispEdges"/><rect x="1011" y="0" width="14" height="90" fill="url(#f74)" shape-rendering="crispEdges"/><rect x="1025" y="0" width="13" height="90" fill="url(#f75)" shape-rendering="crispEdges"/><rect x="1038" y="0" width="14" height="90" fill="url(#f76)" shape-rendering="crispEdges"/><rect x="1052" y="0" width="14" height="90" fill="url(#f77)" shape-rendering="crispEdges"/><rect x="1066" y="0" width="13" height="90" fill="url(#f78)" shape-rendering="crispEdges"/><rect x="1079" y="0" width="14" height="90" fill="url(#f79)" shape-rendering="crispEdges"/></svg>
  <svg style="left:0;top:0" width="1093" height="505" viewBox="0 0 1093 505">
    <defs>
      <linearGradient id="gmaj" x1="0" y1="0" x2="0" y2="505" gradientUnits="userSpaceOnUse">
        <stop offset="0" stop-color="#fff" stop-opacity="0"/>
        <stop offset="0.14" stop-color="#fff" stop-opacity="0"/>
        <stop offset="0.17" stop-color="#fff" stop-opacity="0.15"/>
        <stop offset="0.23" stop-color="#fff" stop-opacity="0.42"/>
        <stop offset="0.36" stop-color="#fff" stop-opacity="0.75"/>
        <stop offset="0.6" stop-color="#fff" stop-opacity="1"/>
        <stop offset="1" stop-color="#fff" stop-opacity="1"/>
      </linearGradient>
      <mask id="mmaj" maskUnits="userSpaceOnUse" x="0" y="0" width="1093" height="505"><rect width="1093" height="505" fill="url(#gmaj)"/></mask>
      <linearGradient id="gmin" x1="0" y1="0" x2="0" y2="505" gradientUnits="userSpaceOnUse">
        <stop offset="0" stop-color="#fff" stop-opacity="0"/>
        <stop offset="0.45" stop-color="#fff" stop-opacity="0"/>
        <stop offset="0.75" stop-color="#fff" stop-opacity="0.6"/>
        <stop offset="1" stop-color="#fff" stop-opacity="1"/>
      </linearGradient>
      <mask id="mmin" maskUnits="userSpaceOnUse" x="0" y="0" width="1093" height="505"><rect width="1093" height="505" fill="url(#gmin)"/></mask>
    </defs>
    <g mask="url(#mmin)" stroke="#766e69" stroke-width="1" fill="none"><path d="M-5.0 174.4L16.0 130.3"/><path d="M1098.0 172.1L1078.2 130.4"/><path d="M-5.0 234.1L29.8 129.0"/><path d="M1098.0 231.2L1064.3 129.1"/><path d="M-5.0 385.9L43.3 127.8"/><path d="M1098.0 382.6L1050.8 127.9"/><path d="M40.0 510.0L56.4 126.6"/><path d="M1053.3 510.0L1037.7 126.7"/><path d="M108.2 510.0L69.2 125.4"/><path d="M985.0 510.0L1024.9 125.5"/><path d="M176.5 510.0L81.7 124.3"/><path d="M916.7 510.0L1012.4 124.4"/><path d="M244.7 510.0L93.8 123.2"/><path d="M848.4 510.0L1000.3 123.3"/><path d="M313.0 510.0L105.6 122.1"/><path d="M780.1 510.0L988.4 122.2"/><path d="M381.2 510.0L117.1 121.0"/><path d="M711.8 510.0L976.9 121.1"/><path d="M517.7 510.0L139.4 119.0"/><path d="M575.2 510.0L954.6 119.1"/><path d="M585.9 510.0L150.1 118.0"/><path d="M506.9 510.0L943.9 118.1"/><path d="M654.1 510.0L160.6 117.1"/><path d="M438.6 510.0L933.4 117.1"/><path d="M722.4 510.0L170.8 116.1"/><path d="M370.3 510.0L923.2 116.2"/><path d="M790.6 510.0L180.8 115.2"/><path d="M302.0 510.0L913.2 115.3"/><path d="M858.8 510.0L190.5 114.3"/><path d="M233.7 510.0L903.4 114.4"/><path d="M927.1 510.0L200.0 113.5"/><path d="M165.4 510.0L893.9 113.5"/><path d="M995.3 510.0L209.4 112.6"/><path d="M97.1 510.0L884.5 112.7"/><path d="M1063.5 510.0L218.5 111.8"/><path d="M28.8 510.0L875.4 111.8"/><path d="M1098.0 467.7L236.1 110.2"/><path d="M-5.0 467.4L857.8 110.2"/><path d="M1098.0 443.4L244.6 109.4"/><path d="M-5.0 443.2L849.2 109.4"/><path d="M1098.0 421.7L253.0 108.6"/><path d="M-5.0 421.5L840.9 108.7"/><path d="M1098.0 402.1L261.2 107.9"/><path d="M-5.0 402.0L832.7 107.9"/><path d="M1098.0 384.5L269.2 107.1"/><path d="M-5.0 384.4L824.6 107.2"/><path d="M1098.0 368.5L277.0 106.4"/><path d="M-5.0 368.4L816.8 106.5"/><path d="M1098.0 353.9L284.7 105.7"/><path d="M-5.0 353.8L809.1 105.8"/><path d="M1098.0 340.6L292.2 105.0"/><path d="M-5.0 340.5L801.6 105.1"/><path d="M1098.0 328.3L299.6 104.4"/><path d="M-5.0 328.2L794.2 104.4"/><path d="M1098.0 306.5L314.0 103.1"/><path d="M-5.0 306.4L779.8 103.1"/><path d="M1098.0 296.8L320.9 102.4"/><path d="M-5.0 296.7L772.9 102.4"/><path d="M1098.0 287.7L327.7 101.8"/><path d="M-5.0 287.7L766.0 101.8"/><path d="M1098.0 279.3L334.4 101.2"/><path d="M-5.0 279.2L759.3 101.2"/><path d="M1098.0 271.4L341.0 100.6"/><path d="M-5.0 271.4L752.8 100.6"/><path d="M1098.0 264.0L347.5 100.0"/><path d="M-5.0 264.0L746.3 100.0"/><path d="M1098.0 257.1L353.8 99.4"/><path d="M-5.0 257.1L740.0 99.4"/><path d="M1098.0 250.6L360.0 98.8"/><path d="M-5.0 250.5L733.8 98.9"/><path d="M1098.0 244.4L366.1 98.3"/><path d="M-5.0 244.4L727.7 98.3"/><path d="M1098.0 233.1L378.0 97.2"/><path d="M-5.0 233.1L715.8 97.2"/><path d="M1098.0 227.9L383.8 96.7"/><path d="M-5.0 227.9L710.0 96.7"/><path d="M1098.0 223.0L389.4 96.2"/><path d="M-5.0 223.0L704.3 96.2"/><path d="M1098.0 218.3L395.0 95.6"/><path d="M-5.0 218.3L698.7 95.7"/><path d="M1098.0 213.9L400.5 95.1"/><path d="M-5.0 213.9L693.3 95.2"/><path d="M1098.0 209.6L405.9 94.6"/><path d="M-5.0 209.6L687.9 94.7"/><path d="M1098.0 205.6L411.2 94.2"/><path d="M-5.0 205.6L682.6 94.2"/><path d="M1098.0 201.7L416.4 93.7"/><path d="M-5.0 201.7L677.3 93.7"/><path d="M1098.0 198.1L421.5 93.2"/><path d="M-5.0 198.1L672.2 93.2"/><path d="M1098.0 191.2L431.5 92.3"/><path d="M-5.0 191.2L662.2 92.3"/><path d="M1098.0 187.9L436.4 91.9"/><path d="M-5.0 187.9L657.3 91.9"/><path d="M1098.0 184.9L441.2 91.4"/><path d="M-5.0 184.9L652.5 91.4"/><path d="M1098.0 181.9L445.9 91.0"/><path d="M-5.0 181.9L647.8 91.0"/><path d="M1098.0 179.0L450.6 90.6"/><path d="M-5.0 179.0L643.2 90.6"/><path d="M1098.0 176.3L455.2 90.1"/><path d="M-5.0 176.3L638.6 90.2"/><path d="M1098.0 173.6L459.7 89.7"/><path d="M-5.0 173.7L634.1 89.7"/><path d="M1098.0 171.1L464.1 89.3"/><path d="M-5.0 171.1L629.6 89.3"/><path d="M1098.0 168.7L468.5 88.9"/><path d="M-5.0 168.7L625.3 88.9"/><path d="M1098.0 164.0L477.0 88.1"/><path d="M-5.0 164.0L616.7 88.2"/><path d="M1098.0 161.8L481.2 87.8"/><path d="M-5.0 161.8L612.6 87.8"/><path d="M1098.0 159.7L485.3 87.4"/><path d="M-5.0 159.7L608.4 87.4"/><path d="M1098.0 157.7L489.3 87.0"/><path d="M-5.0 157.7L604.4 87.0"/><path d="M1098.0 155.7L493.3 86.7"/><path d="M-5.0 155.7L600.4 86.7"/><path d="M1098.0 153.8L497.3 86.3"/><path d="M-5.0 153.8L596.5 86.3"/><path d="M1098.0 151.9L501.1 85.9"/><path d="M-5.0 151.9L592.6 85.9"/><path d="M1098.0 150.1L505.0 85.6"/><path d="M-5.0 150.1L588.8 85.6"/><path d="M1098.0 148.3L508.7 85.2"/><path d="M-5.0 148.4L585.0 85.2"/><path d="M1098.0 145.0L516.1 84.6"/><path d="M-5.0 145.0L577.6 84.6"/><path d="M1098.0 143.4L519.7 84.2"/><path d="M-5.0 143.4L574.0 84.2"/><path d="M1098.0 141.9L523.3 83.9"/><path d="M-5.0 141.9L570.5 83.9"/><path d="M1098.0 140.4L526.8 83.6"/><path d="M-5.0 140.4L567.0 83.6"/><path d="M1098.0 138.9L530.2 83.3"/><path d="M-5.0 138.9L563.5 83.3"/><path d="M1098.0 137.5L533.7 83.0"/><path d="M-5.0 137.5L560.1 83.0"/><path d="M1098.0 136.1L537.0 82.7"/><path d="M-5.0 136.1L556.7 82.7"/><path d="M1098.0 134.8L540.4 82.4"/><path d="M-5.0 134.8L553.4 82.4"/><path d="M1098.0 133.5L543.6 82.1"/><path d="M-5.0 133.5L550.1 82.1"/></g>
    <g mask="url(#mmaj)" stroke="#8c8480" stroke-width="1.3" fill="none"><path d="M-5.0 42.0L-4.3 42.0"/><path d="M-5.0 42.6L3.0 41.9"/><path d="M1098.0 42.5L1091.4 41.9"/><path d="M-5.0 43.3L10.1 41.9"/><path d="M1098.0 43.2L1084.3 41.9"/><path d="M-5.0 44.3L17.1 41.9"/><path d="M1098.0 44.1L1077.2 41.9"/><path d="M-5.0 45.5L24.1 41.8"/><path d="M1098.0 45.4L1070.2 41.8"/><path d="M-5.0 47.4L31.0 41.8"/><path d="M1098.0 47.2L1063.4 41.8"/><path d="M-5.0 50.4L37.7 41.8"/><path d="M1098.0 50.1L1056.6 41.8"/><path d="M-5.0 55.8L44.4 41.7"/><path d="M1098.0 55.5L1049.9 41.7"/><path d="M-5.0 68.8L51.0 41.7"/><path d="M1098.0 68.2L1043.3 41.7"/><path d="M-5.0 142.4L57.5 41.7"/><path d="M1098.0 140.6L1036.8 41.7"/><path d="M449.4 510.0L63.9 41.7"/><path d="M643.5 510.0L1030.4 41.7"/><path d="M1098.0 495.1L70.2 41.6"/><path d="M-5.0 494.8L1024.0 41.6"/><path d="M1098.0 317.0L76.5 41.6"/><path d="M-5.0 316.9L1017.8 41.6"/><path d="M1098.0 238.6L82.6 41.6"/><path d="M-5.0 238.6L1011.6 41.6"/><path d="M1098.0 194.5L88.7 41.5"/><path d="M-5.0 194.5L1005.5 41.5"/><path d="M1098.0 166.3L94.7 41.5"/><path d="M-5.0 166.3L999.5 41.5"/><path d="M1098.0 146.7L100.7 41.5"/><path d="M-5.0 146.7L993.5 41.5"/><path d="M1098.0 132.2L106.5 41.5"/><path d="M-5.0 132.2L987.7 41.5"/><path d="M1098.0 121.1L112.3 41.4"/><path d="M-5.0 121.1L981.9 41.4"/><path d="M1098.0 112.4L118.0 41.4"/><path d="M-5.0 112.4L976.1 41.4"/><path d="M1098.0 105.2L123.7 41.4"/><path d="M-5.0 105.3L970.5 41.4"/><path d="M1098.0 99.4L129.2 41.4"/><path d="M-5.0 99.4L964.9 41.4"/><path d="M1098.0 94.4L134.8 41.3"/><path d="M-5.0 94.4L959.4 41.3"/><path d="M1098.0 90.2L140.2 41.3"/><path d="M-5.0 90.2L953.9 41.3"/><path d="M1098.0 86.6L145.6 41.3"/><path d="M-5.0 86.6L948.6 41.3"/><path d="M1098.0 83.4L150.9 41.3"/><path d="M-5.0 83.4L943.2 41.3"/><path d="M1098.0 80.6L156.1 41.2"/><path d="M-5.0 80.6L938.0 41.2"/><path d="M1098.0 78.1L161.3 41.2"/><path d="M-5.0 78.2L932.8 41.2"/><path d="M1098.0 75.9L166.4 41.2"/><path d="M-5.0 75.9L927.7 41.2"/><path d="M1098.0 74.0L171.5 41.2"/><path d="M-5.0 74.0L922.6 41.2"/><path d="M1098.0 72.2L176.5 41.1"/><path d="M-5.0 72.2L917.6 41.1"/><path d="M1098.0 70.6L181.5 41.1"/><path d="M-5.0 70.6L912.6 41.1"/><path d="M1098.0 69.1L186.4 41.1"/><path d="M-5.0 69.1L907.7 41.1"/><path d="M1098.0 67.7L191.2 41.1"/><path d="M-5.0 67.7L902.9 41.1"/><path d="M1098.0 66.5L196.0 41.0"/><path d="M-5.0 66.5L898.1 41.0"/><path d="M1098.0 65.3L200.7 41.0"/><path d="M-5.0 65.3L893.4 41.0"/><path d="M1098.0 64.3L205.4 41.0"/><path d="M-5.0 64.3L888.7 41.0"/><path d="M1098.0 63.3L210.0 41.0"/><path d="M-5.0 63.3L884.0 41.0"/><path d="M1098.0 62.4L214.6 41.0"/><path d="M-5.0 62.4L879.5 41.0"/><path d="M1098.0 61.5L219.1 40.9"/><path d="M-5.0 61.5L874.9 40.9"/><path d="M1098.0 60.7L223.6 40.9"/><path d="M-5.0 60.7L870.5 40.9"/><path d="M1098.0 60.0L228.0 40.9"/><path d="M-5.0 60.0L866.0 40.9"/><path d="M1098.0 59.3L232.4 40.9"/><path d="M-5.0 59.3L861.7 40.9"/><path d="M1098.0 58.6L236.7 40.9"/><path d="M-5.0 58.6L857.3 40.9"/><path d="M1098.0 58.0L241.0 40.8"/><path d="M-5.0 58.0L853.0 40.8"/><path d="M1098.0 57.4L245.2 40.8"/><path d="M-5.0 57.4L848.8 40.8"/><path d="M1098.0 56.9L249.4 40.8"/><path d="M-5.0 56.9L844.6 40.8"/><path d="M1098.0 56.4L253.5 40.8"/><path d="M-5.0 56.4L840.5 40.8"/><path d="M1098.0 55.9L257.6 40.8"/><path d="M-5.0 55.9L836.4 40.8"/><path d="M1098.0 55.4L261.7 40.7"/><path d="M-5.0 55.4L832.3 40.7"/><path d="M1098.0 54.9L265.7 40.7"/><path d="M-5.0 54.9L828.3 40.7"/><path d="M1098.0 54.5L269.7 40.7"/><path d="M-5.0 54.5L824.3 40.7"/><path d="M1098.0 54.1L273.6 40.7"/><path d="M-5.0 54.1L820.4 40.7"/><path d="M1098.0 53.7L277.5 40.7"/><path d="M-5.0 53.7L816.5 40.7"/><path d="M1098.0 53.4L281.4 40.7"/><path d="M-5.0 53.4L812.6 40.7"/><path d="M1098.0 53.0L285.2 40.6"/><path d="M-5.0 53.0L808.8 40.6"/><path d="M1098.0 52.7L289.0 40.6"/><path d="M-5.0 52.7L805.0 40.6"/><path d="M1098.0 52.3L292.7 40.6"/><path d="M-5.0 52.3L801.3 40.6"/><path d="M1098.0 52.0L296.4 40.6"/><path d="M-5.0 52.0L797.5 40.6"/><path d="M1098.0 51.7L300.1 40.6"/><path d="M-5.0 51.7L793.9 40.6"/><path d="M1098.0 51.4L303.7 40.6"/><path d="M-5.0 51.4L790.2 40.6"/><path d="M1098.0 51.2L307.3 40.5"/><path d="M-5.0 51.2L786.7 40.5"/><path d="M1098.0 50.9L310.8 40.5"/><path d="M-5.0 50.9L783.1 40.5"/><path d="M1098.0 50.6L314.4 40.5"/><path d="M-5.0 50.6L779.6 40.5"/><path d="M1098.0 50.4L317.9 40.5"/><path d="M-5.0 50.4L776.1 40.5"/><path d="M1098.0 50.2L321.3 40.5"/><path d="M-5.0 50.2L772.6 40.5"/><path d="M1098.0 49.9L324.7 40.5"/><path d="M-5.0 49.9L769.2 40.5"/><path d="M1098.0 49.7L328.1 40.4"/><path d="M-5.0 49.7L765.8 40.4"/><path d="M1098.0 49.5L331.5 40.4"/><path d="M-5.0 49.5L762.4 40.4"/><path d="M1098.0 49.3L334.8 40.4"/><path d="M-5.0 49.3L759.1 40.4"/><path d="M1098.0 49.1L338.1 40.4"/><path d="M-5.0 49.1L755.8 40.4"/><path d="M1098.0 48.9L341.4 40.4"/><path d="M-5.0 48.9L752.5 40.4"/><path d="M1098.0 48.7L344.6 40.4"/><path d="M-5.0 48.7L749.3 40.4"/><path d="M1098.0 48.5L347.8 40.4"/><path d="M-5.0 48.5L746.1 40.4"/><path d="M1098.0 48.4L351.0 40.3"/><path d="M-5.0 48.4L742.9 40.3"/><path d="M1098.0 48.2L354.1 40.3"/><path d="M-5.0 48.2L739.8 40.3"/><path d="M1098.0 48.0L357.2 40.3"/><path d="M-5.0 48.0L736.7 40.3"/><path d="M1098.0 47.9L360.3 40.3"/><path d="M-5.0 47.9L733.6 40.3"/><path d="M1098.0 47.7L363.4 40.3"/><path d="M-5.0 47.7L730.5 40.3"/><path d="M1098.0 47.6L366.4 40.3"/><path d="M-5.0 47.6L727.5 40.3"/><path d="M1098.0 47.4L369.4 40.3"/><path d="M-5.0 47.4L724.5 40.3"/><path d="M1098.0 47.3L372.4 40.2"/><path d="M-5.0 47.3L721.5 40.2"/><path d="M1098.0 47.1L375.3 40.2"/><path d="M-5.0 47.1L718.6 40.2"/><path d="M1098.0 47.0L378.3 40.2"/><path d="M-5.0 47.0L715.6 40.2"/><path d="M1098.0 46.9L381.2 40.2"/><path d="M-5.0 46.9L712.7 40.2"/><path d="M1098.0 46.7L384.0 40.2"/><path d="M-5.0 46.7L709.9 40.2"/><path d="M1098.0 46.6L386.9 40.2"/><path d="M-5.0 46.6L707.0 40.2"/><path d="M1098.0 46.5L389.7 40.2"/><path d="M-5.0 46.5L704.2 40.2"/><path d="M1098.0 46.4L392.5 40.1"/><path d="M-5.0 46.4L701.4 40.2"/><path d="M1098.0 46.3L395.3 40.1"/><path d="M-5.0 46.3L698.6 40.1"/><path d="M1098.0 46.1L398.0 40.1"/><path d="M-5.0 46.1L695.9 40.1"/><path d="M1098.0 46.0L400.7 40.1"/><path d="M-5.0 46.0L693.1 40.1"/><path d="M1098.0 45.9L403.4 40.1"/><path d="M-5.0 45.9L690.4 40.1"/><path d="M1098.0 45.8L406.1 40.1"/><path d="M-5.0 45.8L687.7 40.1"/><path d="M1098.0 45.7L408.8 40.1"/><path d="M-5.0 45.7L685.1 40.1"/><path d="M1098.0 45.6L411.4 40.1"/><path d="M-5.0 45.6L682.4 40.1"/><path d="M1098.0 45.5L414.0 40.1"/><path d="M-5.0 45.5L679.8 40.1"/><path d="M1098.0 45.4L416.6 40.0"/><path d="M-5.0 45.4L677.2 40.0"/><path d="M1098.0 45.3L419.2 40.0"/><path d="M-5.0 45.3L674.7 40.0"/><path d="M1098.0 45.2L421.7 40.0"/><path d="M-5.0 45.2L672.1 40.0"/><path d="M1098.0 45.2L424.3 40.0"/><path d="M-5.0 45.2L669.6 40.0"/><path d="M1098.0 45.1L426.8 40.0"/><path d="M-5.0 45.1L667.1 40.0"/><path d="M1098.0 45.0L429.3 40.0"/><path d="M-5.0 45.0L664.6 40.0"/><path d="M1098.0 44.9L431.7 40.0"/><path d="M-5.0 44.9L662.1 40.0"/><path d="M1098.0 44.8L434.2 40.0"/><path d="M-5.0 44.8L659.7 40.0"/><path d="M1098.0 44.7L436.6 39.9"/><path d="M-5.0 44.7L657.3 39.9"/><path d="M1098.0 44.7L439.0 39.9"/><path d="M-5.0 44.7L654.8 39.9"/><path d="M1098.0 44.6L441.4 39.9"/><path d="M-5.0 44.6L652.5 39.9"/><path d="M1098.0 44.5L443.8 39.9"/><path d="M-5.0 44.5L650.1 39.9"/><path d="M1098.0 44.4L446.1 39.9"/><path d="M-5.0 44.4L647.7 39.9"/><path d="M1098.0 44.4L448.4 39.9"/><path d="M-5.0 44.4L645.4 39.9"/><path d="M1098.0 44.3L450.8 39.9"/><path d="M-5.0 44.3L643.1 39.9"/><path d="M1098.0 44.2L453.0 39.9"/><path d="M-5.0 44.2L640.8 39.9"/><path d="M1098.0 44.2L455.3 39.9"/><path d="M-5.0 44.2L638.5 39.9"/><path d="M1098.0 44.1L457.6 39.9"/><path d="M-5.0 44.1L636.3 39.9"/><path d="M1098.0 44.0L459.8 39.8"/><path d="M-5.0 44.0L634.0 39.8"/><path d="M1098.0 44.0L462.0 39.8"/><path d="M-5.0 44.0L631.8 39.8"/><path d="M1098.0 43.9L464.2 39.8"/><path d="M-5.0 43.9L629.6 39.8"/><path d="M1098.0 43.8L466.4 39.8"/><path d="M-5.0 43.8L627.4 39.8"/><path d="M1098.0 43.8L468.6 39.8"/><path d="M-5.0 43.8L625.2 39.8"/><path d="M1098.0 43.7L470.8 39.8"/><path d="M-5.0 43.7L623.1 39.8"/><path d="M1098.0 43.7L472.9 39.8"/><path d="M-5.0 43.7L620.9 39.8"/><path d="M1098.0 43.6L475.0 39.8"/><path d="M-5.0 43.6L618.8 39.8"/><path d="M1098.0 43.6L477.1 39.8"/><path d="M-5.0 43.6L616.7 39.8"/><path d="M1098.0 43.5L479.2 39.8"/><path d="M-5.0 43.5L614.6 39.8"/><path d="M1098.0 43.4L481.3 39.7"/><path d="M-5.0 43.4L612.5 39.7"/><path d="M1098.0 43.4L483.4 39.7"/><path d="M-5.0 43.4L610.5 39.7"/><path d="M1098.0 43.3L485.4 39.7"/><path d="M-5.0 43.3L608.4 39.7"/><path d="M1098.0 43.3L487.4 39.7"/><path d="M-5.0 43.3L606.4 39.7"/><path d="M1098.0 43.2L489.5 39.7"/><path d="M-5.0 43.2L604.4 39.7"/><path d="M1098.0 43.2L491.5 39.7"/><path d="M-5.0 43.2L602.4 39.7"/><path d="M1098.0 43.1L493.4 39.7"/><path d="M-5.0 43.1L600.4 39.7"/><path d="M1098.0 43.1L495.4 39.7"/><path d="M-5.0 43.1L598.4 39.7"/><path d="M1098.0 43.0L497.4 39.7"/><path d="M-5.0 43.0L596.5 39.7"/><path d="M1098.0 43.0L499.3 39.7"/><path d="M-5.0 43.0L594.5 39.7"/><path d="M1098.0 42.9L501.2 39.7"/><path d="M-5.0 42.9L592.6 39.7"/><path d="M1098.0 42.9L503.2 39.6"/><path d="M-5.0 42.9L590.7 39.6"/><path d="M1098.0 42.9L505.1 39.6"/><path d="M-5.0 42.9L588.8 39.6"/><path d="M1098.0 42.8L506.9 39.6"/><path d="M-5.0 42.8L586.9 39.6"/><path d="M1098.0 42.8L508.8 39.6"/><path d="M-5.0 42.8L585.0 39.6"/><path d="M1098.0 42.7L510.7 39.6"/><path d="M-5.0 42.7L583.2 39.6"/><path d="M1098.0 42.7L512.5 39.6"/><path d="M-5.0 42.7L581.3 39.6"/><path d="M1098.0 42.6L514.4 39.6"/><path d="M-5.0 42.6L579.5 39.6"/><path d="M1098.0 42.6L516.2 39.6"/><path d="M-5.0 42.6L577.7 39.6"/><path d="M1098.0 42.6L518.0 39.6"/><path d="M-5.0 42.6L575.8 39.6"/><path d="M1098.0 42.5L519.8 39.6"/><path d="M-5.0 42.5L574.0 39.6"/><path d="M1098.0 42.5L521.6 39.6"/><path d="M-5.0 42.5L572.3 39.6"/><path d="M1098.0 42.4L523.3 39.6"/><path d="M-5.0 42.4L570.5 39.6"/><path d="M1098.0 42.4L525.1 39.5"/><path d="M-5.0 42.4L568.7 39.5"/><path d="M1098.0 42.4L526.8 39.5"/><path d="M-5.0 42.4L567.0 39.5"/><path d="M1098.0 42.3L528.6 39.5"/><path d="M-5.0 42.3L565.2 39.5"/><path d="M1098.0 42.3L530.3 39.5"/><path d="M-5.0 42.3L563.5 39.5"/><path d="M1098.0 42.3L532.0 39.5"/><path d="M-5.0 42.3L561.8 39.5"/><path d="M1098.0 42.2L533.7 39.5"/><path d="M-5.0 42.2L560.1 39.5"/><path d="M1098.0 42.2L535.4 39.5"/><path d="M-5.0 42.2L558.4 39.5"/><path d="M1098.0 42.2L537.1 39.5"/><path d="M-5.0 42.2L556.7 39.5"/><path d="M1098.0 42.1L538.7 39.5"/><path d="M-5.0 42.1L555.1 39.5"/><path d="M1098.0 42.1L540.4 39.5"/><path d="M-5.0 42.1L553.4 39.5"/><path d="M1098.0 42.1L542.0 39.5"/><path d="M-5.0 42.1L551.8 39.5"/><path d="M1098.0 42.0L543.7 39.5"/><path d="M-5.0 42.0L550.1 39.5"/><path d="M1098.0 42.0L545.3 39.5"/><path d="M-5.0 42.0L548.5 39.5"/><path d="M1098.0 42.0L546.9 39.4"/><path d="M-5.0 42.0L546.9 39.4"/></g>
  </svg>
  <!-- cube -->
  <svg style="left:530px;top:235px" width="33" height="35" viewBox="0 0 33 35">
    <path d="M16.5 0.8L32 8V25.5L16.5 34L1 25.5V8Z" fill="#a9b4c4"/>
    <path d="M16.5 0.8L32 8L16.5 15.5L1 8Z" fill="#eceef0"/>
    <path d="M1 8L16.5 15.5V34L1 25.5Z" fill="#c5ccd6"/>
    <path d="M16.5 15.5L32 8V25.5L16.5 34Z" fill="#8d9bb2"/>
  </svg>
  <!-- camera icon -->
  <svg style="left:420px;top:177px" width="16" height="14" viewBox="0 0 16 14"><circle cx="3.4" cy="7.4" r="2.7" fill="#fafafa"/><circle cx="8.2" cy="4.4" r="2.9" fill="#fafafa"/><rect x="3.6" y="6.8" width="8.8" height="5.6" rx="0.8" fill="#fafafa"/><path d="M12 8.8L14.9 7.6V11.4L12 10.4Z" fill="#fafafa"/></svg>
  <!-- light icon -->
  <svg style="left:536.5px;top:178.5px" width="21" height="21" viewBox="0 0 21 21"><circle cx="10.5" cy="10.5" r="5.2" fill="#5e5650"/><circle cx="10.5" cy="10.5" r="4.1" fill="#f5f0d6"/><g stroke="#ece5c6" stroke-width="1.3" stroke-linecap="round"><path d="M10.5 0.8V4.3M10.5 16.7V20.2M0.8 10.5H4.3M16.7 10.5H20.2M3.6 3.6L5.9 5.9M15.1 15.1L17.4 17.4M3.6 17.4L5.9 15.1M15.1 5.9L17.4 3.6"/><path d="M6.8 2.4L7.5 4.1M14.2 2.4L13.5 4.1M6.8 18.6L7.5 16.9M14.2 18.6L13.5 16.9M2.4 6.8L4.1 7.5M2.4 14.2L4.1 13.5M18.6 6.8L16.9 7.5M18.6 14.2L16.9 13.5" stroke-width="1.1"/></g></svg>
  <!-- overlay -->
  <div class="a" style="left:99px;top:258px;width:893px;height:107px;border-radius:14px;background:rgba(40,36,34,0.45)"></div>
  <span class="t" style="left:139px;top:300.5px;font-size:24px;letter-spacing:0px;color:#f0f0f0;transform-origin:0 0;transform:scaleX(1.1365)">All compiler errors have to be fixed before you can enter playmode!</span>
  <!-- tool palette -->
  <div class="a" style="left:3px;top:2.5px;width:42px;height:145px;background:#2a2a2a;border:1px solid #1a1a1a;border-radius:4px"></div>
  <div class="a" style="left:16px;top:8px;width:16px;height:1px;background:#7a7a7a"></div>
  <div class="a" style="left:16px;top:11.5px;width:16px;height:1px;background:#7a7a7a"></div>
  <div class="a" style="left:5.5px;top:20px;width:37px;height:20px;background:#4f4f4f;border-radius:2px 2px 0 0"></div>
  <div class="a" style="left:5.5px;top:41px;width:37px;height:19px;background:#3e5b82"></div>
  <div class="a" style="left:5.5px;top:61.5px;width:37px;height:19.5px;background:#4a4a4a"></div>
  <div class="a" style="left:5.5px;top:82px;width:37px;height:19.5px;background:#4a4a4a"></div>
  <div class="a" style="left:5.5px;top:103px;width:37px;height:19.5px;background:#4a4a4a"></div>
  <div class="a" style="left:5.5px;top:124px;width:37px;height:19px;background:#4a4a4a;border-radius:0 0 2px 2px"></div>
  <svg style="left:16px;top:21px" width="17" height="17" viewBox="0 0 17 17"><g stroke="#d6d6d6" stroke-width="2.1" stroke-linecap="round" fill="none"><path d="M5.2 2.6L6.3 9M8.7 1.5V9M12.2 2.6L11.2 9M14.8 5.6L13 10.5M2.7 7.9L5.6 12.2"/></g><path d="M4.6 8.2H13.6L12.4 15.6H5.7Z" fill="#d6d6d6"/></svg>
  <svg style="left:15px;top:42px" width="18" height="18" viewBox="0 0 18 18"><path d="M9 1V17M1 9H17" stroke="#e8e8e8" stroke-width="1" stroke-dasharray="2 1.5"/><path d="M9 0.5L6.5 3.5H11.5Z M9 17.5L6.5 14.5H11.5Z M0.5 9L3.5 6.5V11.5Z M17.5 9L14.5 6.5V11.5Z" fill="#e8e8e8"/></svg>
  <svg style="left:16px;top:63px" width="17" height="17" viewBox="0 0 17 17"><g stroke="#cfcfcf" stroke-width="1.5" fill="none"><path d="M5.6 14.2A6.3 6.3 0 0 1 8.6 2"/><path d="M12.3 3.4A6.3 6.3 0 0 1 9.4 14.5"/></g><path d="M10.2 0.6L13.8 1.2L12.6 4.8Z" fill="#cfcfcf"/><path d="M6.8 16L3.2 15.4L4.6 11.8Z" fill="#cfcfcf"/></svg>
  <svg style="left:16px;top:84px" width="16" height="16" viewBox="0 0 16 16"><rect x="1" y="1" width="14" height="14" stroke="#d0d0d0" stroke-width="1.4" fill="none"/><rect x="1" y="9" width="6" height="6" stroke="#d0d0d0" stroke-width="1.4" fill="none"/><path d="M7 9L12 4M8.5 4H12V7.5" stroke="#d0d0d0" stroke-width="1.3" fill="none"/></svg>
  <svg style="left:16px;top:105px" width="16" height="16" viewBox="0 0 16 16"><path d="M4 2H12M4 14H12M2 4V12M14 4V12" stroke="#d0d0d0" stroke-width="1.2" stroke-dasharray="2.5 1.3"/><rect x="0.5" y="0.5" width="3" height="3" fill="#d0d0d0"/><rect x="12.5" y="0.5" width="3" height="3" fill="#d0d0d0"/><rect x="0.5" y="12.5" width="3" height="3" fill="#d0d0d0"/><rect x="12.5" y="12.5" width="3" height="3" fill="#d0d0d0"/></svg>
  <svg style="left:15px;top:125px" width="18" height="18" viewBox="0 0 18 18"><circle cx="9" cy="9" r="6.5" stroke="#c8c8c8" stroke-width="1.2" fill="none" stroke-dasharray="5 2"/><path d="M9 4V14M4 9H14" stroke="#c8c8c8" stroke-width="1"/><path d="M9 3.5L7.5 5.5H10.5Z M9 14.5L7.5 12.5H10.5Z M3.5 9L5.5 7.5V10.5Z M14.5 9L12.5 7.5V10.5Z" fill="#c8c8c8"/><path d="M15 1L17.5 0.5L17 3Z M3 17L0.5 17.5L1 15Z" fill="#c8c8c8"/></svg>
  <!-- scene gizmo -->
  <div class="a" style="left:987px;top:8px;width:16px;height:1.2px;background:#333"></div>
  <div class="a" style="left:987px;top:11px;width:16px;height:1.2px;background:#333"></div>
  <svg style="left:990px;top:5px" width="100" height="80" viewBox="0 0 100 80">
    <g fill="#dedede"><ellipse cx="34" cy="39.5" rx="7" ry="3.6" transform="rotate(28 34 39.5)"/><ellipse cx="62" cy="39.5" rx="7" ry="3.6" transform="rotate(-28 62 39.5)"/><circle cx="48" cy="47" r="7.5"/><path d="M44.5 50H51.5L50.8 65H45.2Z"/><ellipse cx="48" cy="66" rx="3.8" ry="2.6"/></g>
    <path d="M41.5 18.5Q48.5 16 55.5 18.5L48.5 38.5Z" fill="#79d047"/><path d="M41.5 18.5Q45 17.3 48.5 17.2L48.5 38.5Z" fill="#63b83a"/>
    <path d="M20.5 49.8Q31 47.5 41.5 49L27 64.5Q25 65.5 24 63.5Z" fill="#d9473b"/>
    <path d="M55 49Q65.5 47.5 76 49.8L70 63.5Q69 65.5 67 64.5Z" fill="#4d7ee6"/>
    <text x="44.6" y="13.6" font-size="11" font-weight="bold" font-family="Liberation Sans" fill="#eeeeee">y</text>
    <text x="12.5" y="64" font-size="11" font-weight="bold" font-family="Liberation Sans" fill="#eeeeee">x</text>
    <text x="77.5" y="64" font-size="11" font-weight="bold" font-family="Liberation Sans" fill="#eeeeee">z</text>
  </svg>
  <svg style="left:1011px;top:95.5px" width="11" height="11" viewBox="0 0 11 11"><path d="M10.5 1L1 5.5L10.5 10M1 5.5H10.5" stroke="#d0d0d0" stroke-width="1" fill="none"/></svg>
  <span class="t" style="left:1024px;top:94.5px;font-size:12.5px;color:#dcdcdc">Persp</span>
</div>
<div class="a" style="left:361px;top:117px;width:1px;height:506px;background:rgba(255,255,255,0.1)"></div>
<div class="a" style="left:1453px;top:72px;width:2px;height:929px;background:#191919"></div>

<!-- ============ INSPECTOR ============ -->
<div class="tabstrip" style="left:1455px;top:72px;width:448px;height:19px"></div>
<div class="tab" style="left:1455px;top:72px;width:94px;height:19px"></div>
<svg style="left:1463.5px;top:77px" width="11" height="11" viewBox="0 0 11 11"><circle cx="5.5" cy="5.5" r="5.2" fill="#c4c4c4"/><rect x="4.6" y="4.4" width="1.8" height="4.8" fill="#232323"/><circle cx="5.5" cy="2.7" r="1" fill="#232323"/></svg>
<span class="t" style="left:1479.5px;top:77px;font-size:12.5px;letter-spacing:0.15px">Inspector</span>
<svg style="left:1867px;top:76px" width="10" height="11" viewBox="0 0 10 11"><path d="M2.6 3.6V2.9A2.3 2.3 0 0 1 7.2 2.9V5.4" stroke="#c4c4c4" stroke-width="1.2" fill="none"/><rect x="1.2" y="5.6" width="7.4" height="4.4" rx="0.9" stroke="#c4c4c4" stroke-width="1.2" fill="none"/></svg>
<svg style="left:1887.3px;top:76.3px" width="4" height="10" viewBox="0 0 4 10"><rect x="0.5" y="0" width="2.4" height="2.4" fill="#c4c4c4"/><rect x="0.5" y="3.8" width="2.4" height="2.4" fill="#c4c4c4"/><rect x="0.5" y="7.6" width="2.4" height="2.4" fill="#c4c4c4"/></svg>
<div class="a" style="left:1455px;top:91px;width:448px;height:910px;background:#383838"></div>

<!-- ============ PROJECT ============ -->
<div class="a" style="left:0;top:623px;width:1453px;height:1px;background:#141414"></div>
<div class="tabstrip" style="left:0;top:624px;width:1453px;height:19px"></div>
<div class="tab" style="left:0;top:624px;width:79px;height:19px"></div>
<svg style="left:7px;top:630px" width="12" height="10" viewBox="0 0 12 10"><path d="M0 0H4.5L5.8 1.5H12V10H0Z" fill="#c4c4c4"/></svg>
<span class="t" style="left:23.5px;top:628.4px;font-size:12.5px;letter-spacing:0.1px">Project</span>
<svg style="left:1418px;top:628px" width="10" height="11" viewBox="0 0 10 11"><path d="M2.6 3.6V2.9A2.3 2.3 0 0 1 7.2 2.9V5.4" stroke="#c4c4c4" stroke-width="1.2" fill="none"/><rect x="1.2" y="5.6" width="7.4" height="4.4" rx="0.9" stroke="#c4c4c4" stroke-width="1.2" fill="none"/></svg>
<svg style="left:1438px;top:628.5px" width="4" height="10" viewBox="0 0 4 10"><rect x="0.5" y="0" width="2.4" height="2.4" fill="#c4c4c4"/><rect x="0.5" y="3.8" width="2.4" height="2.4" fill="#c4c4c4"/><rect x="0.5" y="7.6" width="2.4" height="2.4" fill="#c4c4c4"/></svg>
<div class="a" style="left:0;top:643px;width:1453px;height:20px;background:#3a3a3a;border-bottom:1px solid #242424"></div>
<svg style="left:6.5px;top:647px" width="13" height="13" viewBox="0 0 13 13"><path d="M6.5 0.5V12.5M0.5 6.5H12.5" stroke="#d0d0d0" stroke-width="1.7"/></svg>
<svg style="left:22.5px;top:651px" width="9" height="5" viewBox="0 0 9 5"><path d="M0 0H8L4 4.6Z" fill="#c4c4c4"/></svg>
<div class="a" style="left:991px;top:645px;width:298px;height:15.5px;background:#2a2a2a;border-radius:3px;border:1px solid #212121"></div>
<svg style="left:995.5px;top:649.5px" width="9" height="9" viewBox="0 0 9 9"><circle cx="3.2" cy="3.2" r="2.3" stroke="#c4c4c4" stroke-width="1.3" fill="none"/><path d="M4.9 4.9L7.8 7.8" stroke="#c4c4c4" stroke-width="1.5"/></svg>
<svg style="left:1290.5px;top:646.5px" width="14" height="14" viewBox="0 0 14 14"><rect x="4" y="1" width="9" height="9" stroke="#c4c4c4" fill="none" stroke-width="1.2"/><rect x="0.8" y="8.2" width="4.6" height="4.6" stroke="#c4c4c4" fill="#3a3a3a" stroke-width="1.2"/><path d="M6.5 7.5L11 3M7.8 3H11V6.2" stroke="#c4c4c4" fill="none" stroke-width="1.1"/></svg>
<div class="a" style="left:1309px;top:643px;width:1px;height:20px;background:#2e2e2e"></div>
<div class="a" style="left:1335px;top:643px;width:1px;height:20px;background:#2e2e2e"></div>
<div class="a" style="left:1362px;top:643px;width:1px;height:20px;background:#2e2e2e"></div>
<div class="a" style="left:1387px;top:643px;width:1px;height:20px;background:#2e2e2e"></div>
<div class="a" style="left:1412px;top:643px;width:1px;height:20px;background:#2e2e2e"></div>
<svg style="left:1315.5px;top:646px" width="14" height="14" viewBox="0 0 14 14"><rect x="1.9" y="0.1" width="5.2" height="4.8" fill="#c4c4c4"/><path d="M9 2.5L12.3 9.1H5.8Z" fill="#c4c4c4"/><circle cx="4.2" cy="9.6" r="3.8" fill="#c4c4c4" stroke="#3c3c3c" stroke-width="0.6"/></svg>
<svg style="left:1341.5px;top:647px" width="12" height="12" viewBox="0 0 12 12"><path d="M6.5 0.5H11.5V5.5L5 12L0 7Z" fill="#c4c4c4"/><circle cx="9" cy="3" r="1" fill="#3a3a3a"/></svg>
<svg style="left:1367px;top:646px" width="14" height="14" viewBox="0 0 14 14"><path d="M4.2 0.5H9.8L13.5 4.2V9.8L9.8 13.5H4.2L0.5 9.8V4.2Z" fill="#d0d0d0"/><rect x="6.2" y="2.8" width="1.6" height="6" fill="#3a3a3a"/><rect x="6.2" y="9.8" width="1.6" height="1.6" fill="#3a3a3a"/></svg>
<svg style="left:1393px;top:646.5px" width="13" height="13" viewBox="0 0 13 13"><path d="M6.5 0.5L8.2 4.6L12.5 4.8L9.2 7.6L10.3 12L6.5 9.6L2.7 12L3.8 7.6L0.5 4.8L4.8 4.6Z" fill="#8c8c8c"/></svg>
<svg style="left:1418.5px;top:646px" width="16" height="14" viewBox="0 0 16 14"><path d="M1 7C3 4.5 5.5 3.3 8 3.3S13 4.5 15 7C13 9.5 10.5 10.7 8 10.7" stroke="#c4c4c4" stroke-width="1.3" fill="none"/><circle cx="8" cy="7" r="1.8" stroke="#c4c4c4" stroke-width="1.1" fill="none"/><path d="M2 13.5L13.5 0.5" stroke="#c4c4c4" stroke-width="1.3"/></svg>
<span class="t" style="left:1434.8px;top:647.5px;font-size:12.5px;letter-spacing:-0.6px">13</span>

<!-- project left tree -->
<div class="a" style="left:0;top:663px;width:205px;height:338px;background:#383838"></div>
<svg style="left:4px;top:669px" width="10" height="8" viewBox="0 0 10 8"><path d="M0.2 0.2H9.8L5 7.6Z" fill="#6f6f6f"/></svg>
<svg style="left:18px;top:665.5px" width="12" height="12" viewBox="0 0 12 12"><path d="M6 0.3L7.6 4.1L11.7 4.4L8.6 7.1L9.6 11.2L6 9L2.4 11.2L3.4 7.1L0.3 4.4L4.4 4.1Z" fill="#d0d0d0"/></svg>
<span class="t" style="left:34.5px;top:665.8px;font-size:12.8px;font-weight:bold;color:#d2d2d2;letter-spacing:0.25px">Favorites</span>
<svg style="left:31.5px;top:683px" width="12" height="12" viewBox="0 0 12 12"><circle cx="4.8" cy="4.8" r="3.8" stroke="#c4c4c4" stroke-width="1.3" fill="none"/><path d="M7.5 7.5L11 11" stroke="#c4c4c4" stroke-width="1.6"/></svg>
<span class="t" style="left:47.5px;top:681.6px;font-size:12.5px;letter-spacing:0.05px">All Materials</span>
<svg style="left:31.5px;top:699px" width="12" height="12" viewBox="0 0 12 12"><circle cx="4.8" cy="4.8" r="3.8" stroke="#c4c4c4" stroke-width="1.3" fill="none"/><path d="M7.5 7.5L11 11" stroke="#c4c4c4" stroke-width="1.6"/></svg>
<span class="t" style="left:47.5px;top:697.6px;font-size:12.5px;letter-spacing:0.05px">All Models</span>
<svg style="left:31.5px;top:715px" width="12" height="12" viewBox="0 0 12 12"><circle cx="4.8" cy="4.8" r="3.8" stroke="#c4c4c4" stroke-width="1.3" fill="none"/><path d="M7.5 7.5L11 11" stroke="#c4c4c4" stroke-width="1.6"/></svg>
<span class="t" style="left:47.5px;top:713.6px;font-size:12.5px;letter-spacing:0.05px">All Prefabs</span>
<svg style="left:4px;top:747px" width="10" height="8" viewBox="0 0 10 8"><path d="M0.2 0.2H9.8L5 7.6Z" fill="#6f6f6f"/></svg>
<svg style="left:17.5px;top:745.5px" width="14" height="10" viewBox="0 0 14 10"><path d="M0.5 9.5V0.5H4.5L5.8 1.8H11V3.5" stroke="#d0d0d0" stroke-width="1" fill="none"/><path d="M0.5 9.5L2.8 4H13.5L11.2 9.5Z" fill="#d0d0d0"/></svg>
<span class="t" style="left:34.5px;top:744.1px;font-size:12.8px;font-weight:bold;color:#d2d2d2;letter-spacing:0.2px">Assets</span>
<svg style="left:31.5px;top:761.5px" width="12" height="10" viewBox="0 0 12 10"><path d="M0 0H4.5L5.8 1.5H12V10H0Z" fill="#c8c8c8"/></svg>
<span class="t" style="left:47.5px;top:759.6px;font-size:12.5px">Scenes</span>
<div class="a" style="left:0;top:774px;width:205px;height:16px;background:#4d4d4d"></div>
<svg style="left:31.5px;top:777.5px" width="12" height="10" viewBox="0 0 12 10"><path d="M0 0H4.5L5.8 1.5H12V10H0Z" fill="#c8c8c8"/></svg>
<span class="t" style="left:47.5px;top:775.6px;font-size:12.5px">Script</span>
<svg style="left:4.5px;top:793.5px" width="9" height="10" viewBox="0 0 9 10"><path d="M0.2 0.2V9.6L8.2 4.9Z" fill="#6f6f6f"/></svg>
<svg style="left:17.5px;top:793px" width="12" height="10" viewBox="0 0 12 10"><path d="M0 0H4.5L5.8 1.5H12V10H0Z" fill="#c8c8c8"/></svg>
<span class="t" style="left:34.5px;top:791.5px;font-size:12.8px;font-weight:bold;color:#d2d2d2;letter-spacing:0.25px">Packages</span>

<div class="a" style="left:205px;top:663px;width:1px;height:338px;background:#232323"></div>
<!-- project right -->
<div class="a" style="left:206px;top:663px;width:1247px;height:22px;background:#3e3e3e;border-bottom:1px solid #303030"></div>
<span class="t" style="left:210.3px;top:667.6px;font-size:12.5px;color:#a9a9a9;letter-spacing:0.1px">Assets</span>
<svg style="left:255.5px;top:670px" width="7" height="9" viewBox="0 0 7 9"><path d="M1 0.8L5.5 4.5L1 8.2" stroke="#a0a0a0" stroke-width="1.2" fill="none"/></svg>
<span class="t" style="left:266.3px;top:667.4px;font-size:12.8px;font-weight:bold;color:#cfcfcf;letter-spacing:0.35px">Script</span>
<div class="a" style="left:206px;top:685px;width:1247px;height:295px;background:#333333"></div>
<svg style="left:228.5px;top:698.5px" width="49" height="56" viewBox="0 0 49 56">
  <path d="M3 0.3H36.5L48.6 12.5V53A3 3 0 0 1 45.6 56H3A3 3 0 0 1 0 53V3.3A3 3 0 0 1 3 0.3Z" fill="#efefef"/>
  <g fill="#217a2c"><path d="M18.1 12.5H23.3L18.1 45.9H12.9Z"/><path d="M29.3 12.5H34.5L28.6 45.9H23.4Z"/><path d="M11.5 20.1H37.1V24.3H11Z"/><path d="M9.8 32.4H35.4V36.6H9.3Z"/></g>
</svg>
<span class="t" style="left:227.5px;top:760.8px;font-size:11px;letter-spacing:-0.35px;color:#c4c4c4">CubeMove</span>
<div class="a" style="left:206px;top:980px;width:1247px;height:21px;background:#3d3d3d;border-top:1px solid #474747"></div>
<div class="a" style="left:1382.5px;top:991px;width:55px;height:1.2px;background:#8a8a8a"></div>
<div class="a" style="left:1409px;top:986px;width:10px;height:10px;border-radius:50%;background:#b4b4b4"></div>

<!-- ============ STATUS BAR ============ -->
<div class="a" style="left:0;top:1001px;width:1903px;height:21.5px;background:#191919"></div>
<div class="a" style="left:0;top:1022px;width:1903px;height:1px;background:#121216"></div><div class="a" style="left:0;top:1023px;width:1903px;height:1px;background:#c9c9cd"></div>
<svg style="left:2.5px;top:1005px" width="14" height="13" viewBox="0 0 14 13"><path d="M4 0.3H10L13.6 3.8V9.2L10 12.7H4L0.4 9.2V3.8Z" fill="#f05555"/><rect x="6.2" y="2.3" width="1.6" height="6" fill="#191919"/><rect x="6.2" y="9.4" width="1.6" height="1.6" fill="#191919"/></svg>
<span class="t" style="left:20px;top:1006.8px;font-size:12.5px;letter-spacing:0.03px;color:#c63434">Assets\Script\CubeMove.cs(15,17): error CS1026: ) expected</span>
<svg style="left:1804px;top:1005px" width="15" height="16" viewBox="0 0 15 16"><path d="M4 3.5C4 1.5 9 1.5 9 3.5L10 5C10 8 10 11 9 13.5C8 15.5 5 15.5 4 13.5C3 11 3 8 3 5Z" fill="#f2c010"/><path d="M3 6L0.5 4.5M3 9H0.5M3.5 12L1 13.5M10 6L12.5 4.5M3.5 2L2 0.5M9.5 2L11 0.5" stroke="#f2c010" stroke-width="1.2"/><rect x="11.5" y="8" width="2.5" height="4.5" fill="#f2c010"/><rect x="11.5" y="13.5" width="2.5" height="2" fill="#f2c010"/></svg>
<svg style="left:1831px;top:1006px" width="15" height="15" viewBox="0 0 15 15"><ellipse cx="7" cy="3.5" rx="6" ry="2.8" fill="#cfcfcf"/><path d="M1 6.5C1 8.5 13 8.5 13 6.5V8.5C13 10.5 1 10.5 1 8.5Z" fill="#cfcfcf"/><path d="M1 10.5C1 12.5 13 12.5 13 10.5V12C13 14 1 14 1 12Z" fill="#cfcfcf"/><path d="M1 1L14 14.5" stroke="#191919" stroke-width="2.2"/><path d="M1.5 1L14 14" stroke="#cfcfcf" stroke-width="1.1"/></svg>
<svg style="left:1856px;top:1006px" width="15" height="15" viewBox="0 0 15 15"><path d="M7.5 1A6.5 6.5 0 0 1 14 7.5M7.5 14A6.5 6.5 0 0 1 1 7.5" stroke="#cfcfcf" stroke-width="1.4" fill="none" stroke-dasharray="4 2"/><path d="M7.5 3.5A3 3 0 0 1 9.5 8.8V10H5.5V8.8A3 3 0 0 1 7.5 3.5Z" fill="#cfcfcf"/><rect x="6" y="11" width="3" height="1.6" fill="#cfcfcf"/><path d="M1.5 1L14 14" stroke="#cfcfcf" stroke-width="1.2"/></svg>
<svg style="left:1881.5px;top:1005px" width="15" height="15" viewBox="0 0 15 15"><circle cx="7.5" cy="7.5" r="6.6" stroke="#cfcfcf" stroke-width="1.2" fill="none"/><path d="M4.3 7.6L6.6 9.9L10.8 5.4" stroke="#cfcfcf" stroke-width="1.5" fill="none"/></svg>
</body></html>
